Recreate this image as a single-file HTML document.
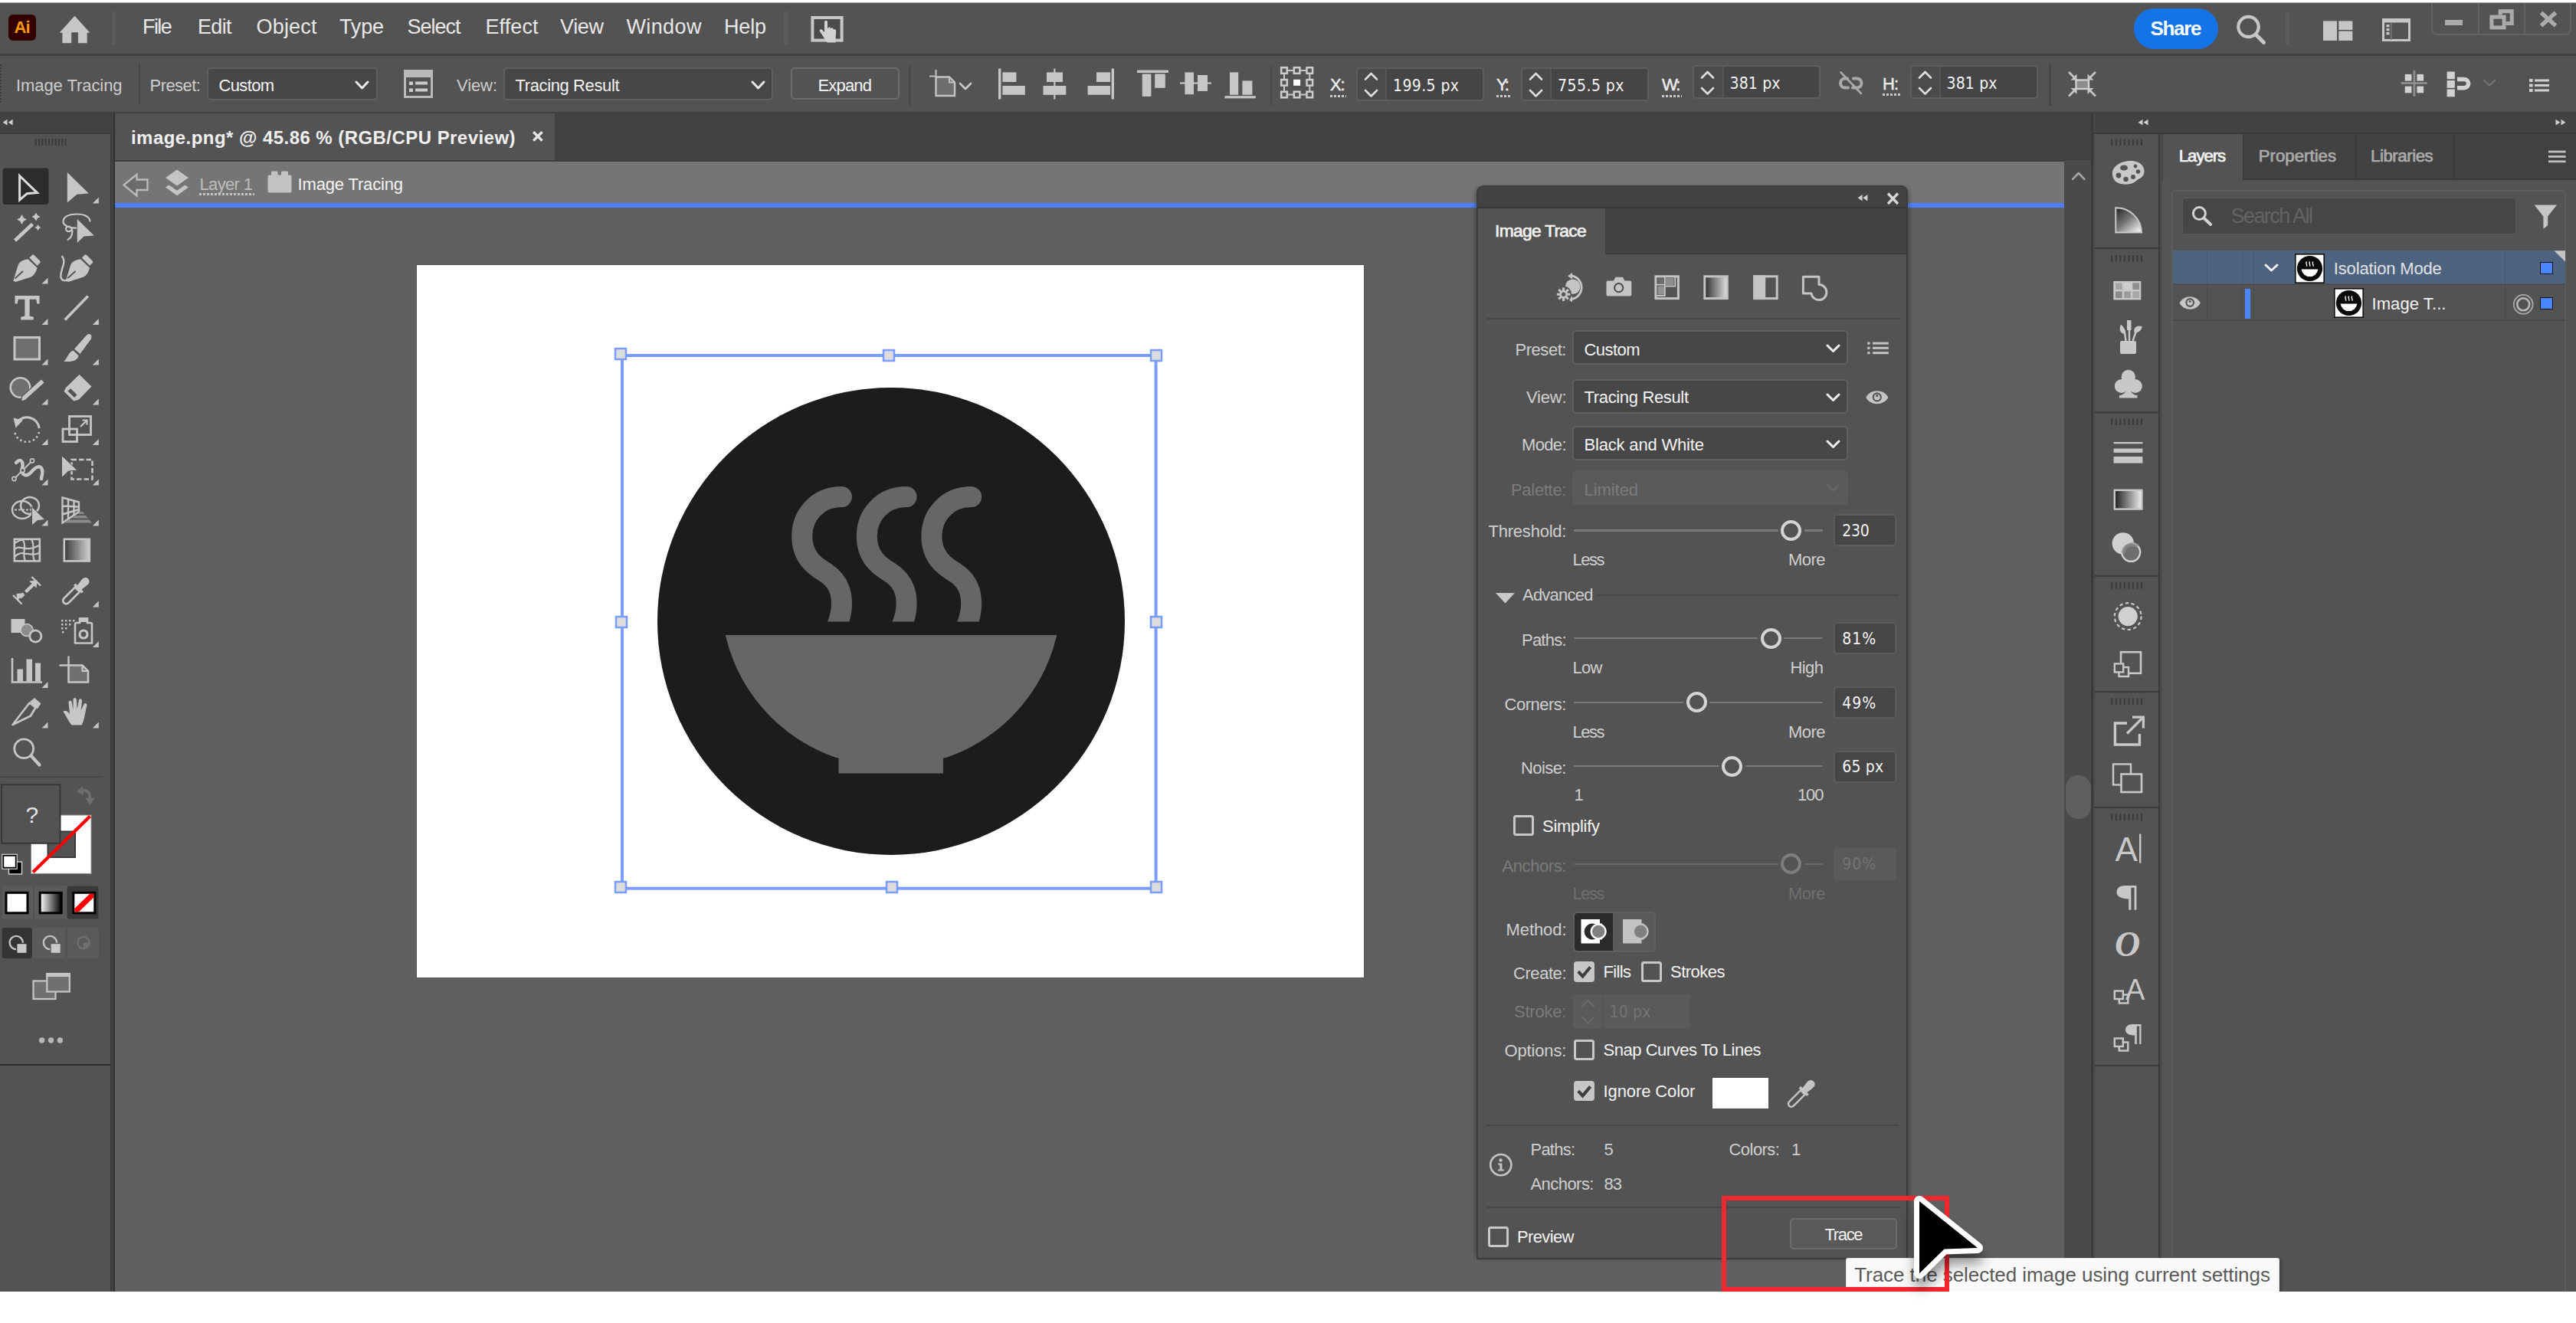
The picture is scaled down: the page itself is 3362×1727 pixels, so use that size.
<!DOCTYPE html>
<html lang="en">
<head>
<meta charset="utf-8">
<title>Adobe Illustrator - Image Trace</title>
<style>
*{box-sizing:border-box;margin:0;padding:0}
html,body{width:3362px;height:1727px;overflow:hidden;background:#fff}
body{position:relative;font-family:"Liberation Sans",sans-serif;color:#dcdcdc}
.a{position:absolute}
.t{position:absolute;white-space:nowrap;display:block}
svg{position:absolute;overflow:visible}
.dd{position:absolute;background:#474747;border:2px solid #5f5f5f;border-radius:5px}
.fld{position:absolute;background:#474747;border:2px solid #5d5d5d;border-radius:4px}
.cb{position:absolute;border:3px solid #c8c8c8;border-radius:3.5px}
</style>
</head>
<body>

<!-- p00_frame -->
<div class="a" id="app" style="left:0px;top:4px;width:3362px;height:1682px;background:#535353;"></div>
<div class="a" style="left:0px;top:3px;width:3362px;height:1px;background:#a9a9a9;"></div>
<div class="a" id="menubar" style="left:0px;top:4px;width:3362px;height:66px;background:#535353;"></div>
<div class="a" style="left:0px;top:70px;width:3362px;height:3px;background:#434343;"></div>
<div class="a" id="ctrlbar" style="left:0px;top:73px;width:3362px;height:73px;background:#535353;"></div>
<div class="a" style="left:0px;top:146px;width:3362px;height:2px;background:#414141;"></div>
<div class="a" id="tabbar" style="left:150px;top:148px;width:2579px;height:62px;background:#424242;"></div>
<div class="a" id="doctab" style="left:150px;top:148px;width:574px;height:62px;background:#535353;"></div>
<div class="a" style="left:150px;top:208.5px;width:2544px;height:2.5px;background:#3e3e3e;"></div>
<div class="a" id="isobar" style="left:150px;top:211px;width:2544px;height:55px;background:#757575;"></div>
<div class="a" id="isoline" style="left:150px;top:265.2px;width:2544px;height:5.8px;background:#4d7ffa;"></div>
<div class="a" id="canvas" style="left:150px;top:271px;width:2544px;height:1415px;background:#606060;"></div>
<div class="a" id="artboard" style="left:544px;top:346px;width:1236px;height:930px;background:#ffffff;outline:1px solid #545454;"></div>

<!-- p10_art -->
<svg id="artwork" style="left:0;top:0" width="3362" height="1727" viewBox="0 0 3362 1727">
  <circle cx="1163" cy="811" r="305" fill="#1d1c1a"/>
  <defs><clipPath id="steamclip"><rect x="1000" y="600" width="340" height="211.5"/></clipPath>
  <clipPath id="bowlclip"><rect x="900" y="829" width="540" height="160.5"/></clipPath></defs>
  <g clip-path="url(#steamclip)" fill="none" stroke="#666666" stroke-width="27" stroke-linecap="round">
    <path id="steam" d="M1098.5,648.6 C1066.3,648.6 1046.7,673.2 1046.7,699.8 C1046.7,727 1063,739 1077.5,747.5 C1093.5,758 1098.5,772 1098.5,788 C1098.5,796.2 1096.9,806 1092,818"/>
    <use href="#steam" x="84.6"/>
    <use href="#steam" x="169.2"/>
  </g>
  <circle cx="1163" cy="779" r="222" fill="#666666" clip-path="url(#bowlclip)"/>
  <rect x="1094.5" y="988" width="136.5" height="21.5" fill="#666666"/>
  <rect x="812" y="464" width="696.6" height="695.7" fill="none" stroke="#7b9cf8" stroke-width="4"/>
  <g fill="#dcdcdc" stroke="#7b9cf8" stroke-width="2.5">
    <rect x="803" y="455" width="14" height="14"/>
    <rect x="1153" y="457" width="14" height="14"/>
    <rect x="1502" y="457" width="14" height="14"/>
    <rect x="804" y="805" width="14" height="14"/>
    <rect x="1502" y="805" width="14" height="14"/>
    <rect x="803" y="1151" width="14" height="14"/>
    <rect x="1157" y="1151" width="14" height="14"/>
    <rect x="1502" y="1151" width="14" height="14"/>
  </g>
</svg>

<!-- p20_menubar -->
<div class="a" style="left:10.5px;top:19px;width:36px;height:33.5px;background:#330000;border-radius:6px;"></div>
<span class="t" style="left:18.60px;top:25.37px;font:normal 700 22px/22px 'Liberation Sans',sans-serif;color:#ff9a00;letter-spacing:-1.000px;">Ai</span>
<svg style="left:77px;top:20px;" width="41" height="37" viewBox="0 0 41 37"><path d="M20.5,0.8 L40.4,22.8 L36.7,22.8 L36.7,36.2 L24.9,36.2 L24.9,22.2 L16.2,22.2 L16.2,36.2 L4.4,36.2 L4.4,22.8 L0.6,22.8 Z" fill="#c6c6c6"/></svg>
<div class="a" style="left:145.5px;top:14.5px;width:5.2px;height:43.5px;background:#5b5b5b;"></div>
<span class="t" style="left:186.00px;top:21.54px;font:normal 400 27px/27px 'Liberation Sans',sans-serif;color:#e8e8e8;letter-spacing:-1.567px;">File</span>
<span class="t" style="left:258.00px;top:21.54px;font:normal 400 27px/27px 'Liberation Sans',sans-serif;color:#e8e8e8;letter-spacing:-0.667px;">Edit</span>
<span class="t" style="left:334.50px;top:21.54px;font:normal 400 27px/27px 'Liberation Sans',sans-serif;color:#e8e8e8;letter-spacing:0.200px;">Object</span>
<span class="t" style="left:443.00px;top:21.54px;font:normal 400 27px/27px 'Liberation Sans',sans-serif;color:#e8e8e8;letter-spacing:-0.167px;">Type</span>
<span class="t" style="left:531.50px;top:21.54px;font:normal 400 27px/27px 'Liberation Sans',sans-serif;color:#e8e8e8;letter-spacing:-1.000px;">Select</span>
<span class="t" style="left:633.50px;top:21.54px;font:normal 400 27px/27px 'Liberation Sans',sans-serif;color:#e8e8e8;letter-spacing:0.100px;">Effect</span>
<span class="t" style="left:731.00px;top:21.54px;font:normal 400 27px/27px 'Liberation Sans',sans-serif;color:#e8e8e8;letter-spacing:-0.375px;">View</span>
<span class="t" style="left:817.50px;top:21.54px;font:normal 400 27px/27px 'Liberation Sans',sans-serif;color:#e8e8e8;letter-spacing:0.375px;">Window</span>
<span class="t" style="left:945.00px;top:21.54px;font:normal 400 27px/27px 'Liberation Sans',sans-serif;color:#e8e8e8;letter-spacing:-0.167px;">Help</span>
<div class="a" style="left:1023.4px;top:14.5px;width:5.4px;height:43.5px;background:#5b5b5b;"></div>
<svg style="left:1058px;top:21px;" width="44" height="36" viewBox="0 0 44 36"><rect x="2.4" y="2" width="38.2" height="29.6" fill="#4b4b4b" stroke="#c6c6c6" stroke-width="4"/>
<path d="M18,8 c0,-3 4,-3 4,0 V16.5 l2.2,-2.6 2,2.2 2.2,-1.2 1.6,2.6 2,-0.6 c1.6,1.8 1.4,5 0.8,8 L32.6,34.5 H21.5 L12,20 c-1.2,-2.4 1.4,-3.6 3,-2 L18,21 Z" fill="#d2d2d2"/></svg>
<div class="a" style="left:2785px;top:10.5px;width:110px;height:53px;background:#1473e6;border-radius:27px;"></div>
<span class="t" style="left:2806.50px;top:24.49px;font:normal 700 26px/26px 'Liberation Sans',sans-serif;color:#ffffff;letter-spacing:-1.312px;">Share</span>
<svg style="left:2916px;top:16px;" width="44" height="44" viewBox="0 0 44 44"><circle cx="18.5" cy="19" r="13.2" fill="none" stroke="#c6c6c6" stroke-width="4.2"/><path d="M28,29 L38.5,39.5" stroke="#c6c6c6" stroke-width="5" stroke-linecap="round"/></svg>
<div class="a" style="left:2983px;top:14.5px;width:5.2px;height:43.5px;background:#5b5b5b;"></div>
<svg style="left:3032px;top:27px;" width="39" height="27" viewBox="0 0 39 27"><rect x="0" y="0.4" width="18" height="25.6" fill="#c6c6c6"/><rect x="20.3" y="0.4" width="18" height="11.6" fill="#c6c6c6"/><rect x="20.3" y="13.6" width="18" height="12.4" fill="#c6c6c6"/></svg>
<svg style="left:3109px;top:24px;" width="38" height="30" viewBox="0 0 38 30"><rect x="1.5" y="1.5" width="34" height="27" fill="none" stroke="#c6c6c6" stroke-width="3"/><rect x="1.5" y="1" width="34" height="4.5" fill="#c6c6c6"/><rect x="5.5" y="8" width="4" height="3.4" fill="#c6c6c6"/><rect x="5.5" y="13" width="4" height="3.4" fill="#c6c6c6"/><rect x="5.5" y="18" width="4" height="3.4" fill="#c6c6c6"/><rect x="11" y="6" width="1.6" height="22" fill="#7a7a7a"/></svg>
<div class="a" style="left:3173px;top:4px;width:183px;height:42px;border:2px solid #626262;border-top:none;border-radius:0 0 8px 8px;"></div>
<div class="a" style="left:3234px;top:4px;width:2px;height:41px;background:#626262;"></div>
<div class="a" style="left:3294px;top:4px;width:2px;height:41px;background:#626262;"></div>
<div class="a" style="left:3191px;top:26.3px;width:23px;height:7px;background:#ababab;"></div>
<svg style="left:3249px;top:12px;" width="33" height="27" viewBox="0 0 33 27"><rect x="14.2" y="2.7" width="15" height="15.8" fill="none" stroke="#ababab" stroke-width="5"/><rect x="0.5" y="7.6" width="21" height="18.8" fill="#535353"/><rect x="2.9" y="10.1" width="16.2" height="13.8" fill="none" stroke="#ababab" stroke-width="5"/></svg>
<svg style="left:3314px;top:15.5px;" width="24" height="18" viewBox="0 0 24 18"><path d="M2.5,0.5 L21.5,17.5 M21.5,0.5 L2.5,17.5" stroke="#ababab" stroke-width="5.4"/></svg>

<!-- p21_ctrl -->
<div class="a" style="left:0;top:84px;width:2px;height:52px;background:repeating-linear-gradient(#3a3a3a 0 2px,#535353 2px 4px)"></div>
<span class="t" style="left:21.00px;top:101.37px;font:normal 400 22px/22px 'Liberation Sans',sans-serif;color:#cdcdcd;letter-spacing:-0.073px;">Image Tracing</span>
<div class="a" style="left:181px;top:82px;width:2px;height:55px;background:#474747;"></div>
<span class="t" style="left:195.50px;top:101.37px;font:normal 400 22px/22px 'Liberation Sans',sans-serif;color:#cdcdcd;letter-spacing:-0.542px;">Preset:</span>
<div class="dd" style="left:270px;top:88px;width:223px;height:43px"></div>
<span class="t" style="left:285.50px;top:101.37px;font:normal 400 22px/22px 'Liberation Sans',sans-serif;color:#f4f4f4;letter-spacing:-0.650px;">Custom</span>
<svg style="left:464px;top:106px;" width="17" height="10" viewBox="0 0 17 10"><path d="M1,1 L8.5,9.0 L16.0,1" fill="none" stroke="#e8e8e8" stroke-width="3" stroke-linecap="round" stroke-linejoin="round"/></svg>
<svg style="left:527px;top:91px;" width="38" height="37" viewBox="0 0 38 37"><rect x="1.5" y="1.5" width="35" height="34" fill="none" stroke="#b9b9b9" stroke-width="3"/><rect x="1" y="1" width="36" height="9" fill="#b9b9b9"/><rect x="7" y="15.5" width="5" height="4.5" fill="#c9c9c9"/><rect x="15" y="15.5" width="16" height="4" fill="#c9c9c9"/><rect x="7" y="24.5" width="5" height="4.5" fill="#c9c9c9"/><rect x="15" y="24.5" width="16" height="4" fill="#c9c9c9"/></svg>
<span class="t" style="left:596.00px;top:101.37px;font:normal 400 22px/22px 'Liberation Sans',sans-serif;color:#cdcdcd;letter-spacing:-0.094px;">View:</span>
<div class="dd" style="left:657px;top:88px;width:352px;height:43px"></div>
<span class="t" style="left:672.50px;top:101.37px;font:normal 400 22px/22px 'Liberation Sans',sans-serif;color:#f4f4f4;letter-spacing:-0.385px;">Tracing Result</span>
<svg style="left:981px;top:106px;" width="17" height="10" viewBox="0 0 17 10"><path d="M1,1 L8.5,9.0 L16.0,1" fill="none" stroke="#e8e8e8" stroke-width="3" stroke-linecap="round" stroke-linejoin="round"/></svg>
<div class="a" style="left:1032px;top:88px;width:142px;height:42px;border:2px solid #6c6c6c;border-radius:5px;background:#535353"></div>
<span class="t" style="left:1067.50px;top:101.37px;font:normal 400 22px/22px 'Liberation Sans',sans-serif;color:#f4f4f4;letter-spacing:-0.825px;">Expand</span>
<div class="a" style="left:1186px;top:86px;width:3px;height:52px;background:#4a4a4a;"></div>
<svg style="left:1212px;top:90px;" width="56" height="38" viewBox="0 0 56 38"><path d="M1,9.5 H9.5 V1" fill="none" stroke="#bdbdbd" stroke-width="2.2"/><path d="M9.5,10.5 H27 L34,17.5 V35 H9.5 Z" fill="#6e6e6e" stroke="#c2c2c2" stroke-width="2.4"/><path d="M27,10.5 V17.5 H34" fill="none" stroke="#c2c2c2" stroke-width="2"/></svg>
<svg style="left:1252px;top:107.5px;" width="16" height="9" viewBox="0 0 16 9"><path d="M1,1 L8.0,8.0 L15.0,1" fill="none" stroke="#c9c9c9" stroke-width="2.6" stroke-linecap="round" stroke-linejoin="round"/></svg>
<svg style="left:0px;top:0px;" width="3362" height="146" viewBox="0 0 3362 146"><rect x="1303.0" y="89.5" width="3.4" height="40.0" fill="#c6c6c6"/><rect x="1308.4" y="94.4" width="18.0" height="12.6" fill="#c6c6c6"/><rect x="1308.4" y="112.0" width="29.4" height="11.8" fill="#c6c6c6"/><rect x="1375.2" y="89.5" width="2.2" height="40.0" fill="#c6c6c6"/><rect x="1366.0" y="94.4" width="21.0" height="12.6" fill="#c6c6c6"/><rect x="1361.5" y="112.0" width="29.8" height="11.8" fill="#c6c6c6"/><rect x="1450.6" y="89.5" width="3.4" height="40.0" fill="#c6c6c6"/><rect x="1431.0" y="94.4" width="18.0" height="12.6" fill="#c6c6c6"/><rect x="1419.6" y="112.0" width="29.4" height="11.8" fill="#c6c6c6"/><rect x="1484.0" y="91.6" width="41.0" height="3.4" fill="#c6c6c6"/><rect x="1490.8" y="96.5" width="11.6" height="29.4" fill="#c6c6c6"/><rect x="1507.2" y="96.5" width="13.6" height="18.3" fill="#c6c6c6"/><rect x="1540.0" y="107.4" width="41.0" height="2.2" fill="#c6c6c6"/><rect x="1546.4" y="94.4" width="11.6" height="28.8" fill="#c6c6c6"/><rect x="1563.0" y="98.0" width="13.0" height="21.0" fill="#c6c6c6"/><rect x="1598.4" y="125.2" width="40.4" height="3.2" fill="#c6c6c6"/><rect x="1605.0" y="94.4" width="11.2" height="29.4" fill="#c6c6c6"/><rect x="1621.4" y="105.4" width="13.0" height="18.4" fill="#c6c6c6"/></svg>
<div class="a" style="left:1657.5px;top:86px;width:2.5px;height:52px;background:#474747;"></div>
<svg style="left:0px;top:0px;" width="3362" height="146" viewBox="0 0 3362 146"><rect x="1672.2" y="88.2" width="7.6" height="7.6" fill="none" stroke="#cdcdcd" stroke-width="2.5"/><rect x="1672.2" y="104.0" width="7.6" height="7.6" fill="none" stroke="#cdcdcd" stroke-width="2.5"/><rect x="1672.2" y="119.7" width="7.6" height="7.6" fill="none" stroke="#cdcdcd" stroke-width="2.5"/><rect x="1688.8" y="88.2" width="7.6" height="7.6" fill="none" stroke="#cdcdcd" stroke-width="2.5"/><rect x="1688.1" y="103.8" width="9" height="8" fill="#ffffff"/><rect x="1688.8" y="119.7" width="7.6" height="7.6" fill="none" stroke="#cdcdcd" stroke-width="2.5"/><rect x="1705.5" y="88.2" width="7.6" height="7.6" fill="none" stroke="#cdcdcd" stroke-width="2.5"/><rect x="1705.5" y="104.0" width="7.6" height="7.6" fill="none" stroke="#cdcdcd" stroke-width="2.5"/><rect x="1705.5" y="119.7" width="7.6" height="7.6" fill="none" stroke="#cdcdcd" stroke-width="2.5"/><path d="M1680.7,92.0 H1687.9 M1697.3,92.0 H1704.6" stroke="#c8c8c8" stroke-width="2"/><path d="M1680.7,123.5 H1687.9 M1697.3,123.5 H1704.6" stroke="#c8c8c8" stroke-width="2"/><path d="M1676.0,96.7 V103.1 M1676.0,112.5 V118.8" stroke="#c8c8c8" stroke-width="2"/><path d="M1709.3,96.7 V103.1 M1709.3,112.5 V118.8" stroke="#c8c8c8" stroke-width="2"/></svg>
<span class="t" style="left:1736.00px;top:100.37px;font:normal 400 22px/22px 'Liberation Sans',sans-serif;color:#ececec;letter-spacing:-1.250px;-webkit-text-stroke:0.5px #ececec;">X:</span>
<div class="a" style="left:1735.5px;top:123.5px;width:21.5px;height:3px;background:repeating-linear-gradient(90deg,#c8c8c8 0 3px,transparent 3px 5px)"></div>
<div class="fld" style="left:1769.5px;top:87.5px;width:167px;height:44px;background:#4b4b4b"></div>
<div class="a" style="left:1809.5px;top:89.5px;width:125px;height:40px;background:#454545;border-radius:0 3px 3px 0;"></div>
<div class="a" style="left:1808.0px;top:89.5px;width:2px;height:40px;background:#555555;"></div>
<svg style="left:1780.5px;top:95.0px;" width="17" height="9.5" viewBox="0 0 17 9.5"><path d="M1,8.5 L8.5,1 L16.0,8.5" fill="none" stroke="#dedede" stroke-width="2.6" stroke-linecap="round" stroke-linejoin="round"/></svg>
<svg style="left:1780.5px;top:116.5px;" width="17" height="9.5" viewBox="0 0 17 9.5"><path d="M1,1 L8.5,8.5 L16.0,1" fill="none" stroke="#dedede" stroke-width="2.6" stroke-linecap="round" stroke-linejoin="round"/></svg>
<span class="t" style="left:1818.00px;top:102.23px;font:normal 400 21px/21px 'DejaVu Sans Condensed','DejaVu Sans',sans-serif;color:#f4f4f4;font-stretch:condensed;letter-spacing:0.393px;">199.5 px</span>
<span class="t" style="left:1953.00px;top:100.37px;font:normal 400 22px/22px 'Liberation Sans',sans-serif;color:#ececec;letter-spacing:-2.625px;-webkit-text-stroke:0.5px #ececec;">Y:</span>
<div class="a" style="left:1952.5px;top:123.5px;width:19.0px;height:3px;background:repeating-linear-gradient(90deg,#c8c8c8 0 3px,transparent 3px 5px)"></div>
<div class="fld" style="left:1984.5px;top:87.5px;width:167px;height:44px;background:#4b4b4b"></div>
<div class="a" style="left:2024.5px;top:89.5px;width:125px;height:40px;background:#454545;border-radius:0 3px 3px 0;"></div>
<div class="a" style="left:2023.0px;top:89.5px;width:2px;height:40px;background:#555555;"></div>
<svg style="left:1995.5px;top:95.0px;" width="17" height="9.5" viewBox="0 0 17 9.5"><path d="M1,8.5 L8.5,1 L16.0,8.5" fill="none" stroke="#dedede" stroke-width="2.6" stroke-linecap="round" stroke-linejoin="round"/></svg>
<svg style="left:1995.5px;top:116.5px;" width="17" height="9.5" viewBox="0 0 17 9.5"><path d="M1,1 L8.5,8.5 L16.0,1" fill="none" stroke="#dedede" stroke-width="2.6" stroke-linecap="round" stroke-linejoin="round"/></svg>
<span class="t" style="left:2033.00px;top:102.23px;font:normal 400 21px/21px 'DejaVu Sans Condensed','DejaVu Sans',sans-serif;color:#f4f4f4;font-stretch:condensed;letter-spacing:0.464px;">755.5 px</span>
<span class="t" style="left:2169.00px;top:100.37px;font:normal 400 22px/22px 'Liberation Sans',sans-serif;color:#ececec;letter-spacing:-2.000px;-webkit-text-stroke:0.5px #ececec;">W:</span>
<div class="a" style="left:2168.5px;top:123.5px;width:26.5px;height:3px;background:repeating-linear-gradient(90deg,#c8c8c8 0 3px,transparent 3px 5px)"></div>
<div class="fld" style="left:2209px;top:85px;width:167px;height:44px;background:#4b4b4b"></div>
<div class="a" style="left:2249px;top:87px;width:125px;height:40px;background:#454545;border-radius:0 3px 3px 0;"></div>
<div class="a" style="left:2247.5px;top:87px;width:2px;height:40px;background:#555555;"></div>
<svg style="left:2220px;top:92.5px;" width="17" height="9.5" viewBox="0 0 17 9.5"><path d="M1,8.5 L8.5,1 L16.0,8.5" fill="none" stroke="#dedede" stroke-width="2.6" stroke-linecap="round" stroke-linejoin="round"/></svg>
<svg style="left:2220px;top:114px;" width="17" height="9.5" viewBox="0 0 17 9.5"><path d="M1,1 L8.5,8.5 L16.0,1" fill="none" stroke="#dedede" stroke-width="2.6" stroke-linecap="round" stroke-linejoin="round"/></svg>
<span class="t" style="left:2257.50px;top:99.03px;font:normal 400 21px/21px 'DejaVu Sans Condensed','DejaVu Sans',sans-serif;color:#f4f4f4;font-stretch:condensed;letter-spacing:0.150px;">381 px</span>
<span class="t" style="left:2457.00px;top:98.87px;font:normal 400 22px/22px 'Liberation Sans',sans-serif;color:#ececec;letter-spacing:-1.000px;-webkit-text-stroke:0.5px #ececec;">H:</span>
<div class="a" style="left:2456.5px;top:122.0px;width:23.0px;height:3px;background:repeating-linear-gradient(90deg,#c8c8c8 0 3px,transparent 3px 5px)"></div>
<div class="fld" style="left:2492.5px;top:85px;width:167px;height:44px;background:#4b4b4b"></div>
<div class="a" style="left:2532.5px;top:87px;width:125px;height:40px;background:#454545;border-radius:0 3px 3px 0;"></div>
<div class="a" style="left:2531.0px;top:87px;width:2px;height:40px;background:#555555;"></div>
<svg style="left:2503.5px;top:92.5px;" width="17" height="9.5" viewBox="0 0 17 9.5"><path d="M1,8.5 L8.5,1 L16.0,8.5" fill="none" stroke="#dedede" stroke-width="2.6" stroke-linecap="round" stroke-linejoin="round"/></svg>
<svg style="left:2503.5px;top:114px;" width="17" height="9.5" viewBox="0 0 17 9.5"><path d="M1,1 L8.5,8.5 L16.0,1" fill="none" stroke="#dedede" stroke-width="2.6" stroke-linecap="round" stroke-linejoin="round"/></svg>
<span class="t" style="left:2540.50px;top:99.03px;font:normal 400 21px/21px 'DejaVu Sans Condensed','DejaVu Sans',sans-serif;color:#f4f4f4;font-stretch:condensed;letter-spacing:0.150px;">381 px</span>
<svg style="left:2399px;top:93px;" width="34" height="31" viewBox="0 0 34 31"><path d="M12,9.5 H9 a6,6 0 0 0 0,12 H13 M20,9.5 H24.5 a6,6 0 0 1 0,12 H19" fill="none" stroke="#a9a9a9" stroke-width="4" stroke-linecap="round"/><path d="M3.5,1.5 L30,29" stroke="#a9a9a9" stroke-width="2.6" stroke-linecap="round"/></svg>
<div class="a" style="left:2674px;top:84px;width:2.5px;height:54px;background:#474747;"></div>
<svg style="left:0px;top:0px;" width="3362" height="146" viewBox="0 0 3362 146"><path d="M2700.0,94.0 L2708.0,102.0" stroke="#c6c6c6" stroke-width="2.6"/><path d="M2710.5,104.5 L2710.5,96.5 L2702.5,104.5 Z" fill="#c6c6c6"/><path d="M2735.0,94.0 L2727.0,102.0" stroke="#c6c6c6" stroke-width="2.6"/><path d="M2724.5,104.5 L2724.5,96.5 L2732.5,104.5 Z" fill="#c6c6c6"/><path d="M2700.0,125.5 L2708.0,117.5" stroke="#c6c6c6" stroke-width="2.6"/><path d="M2710.5,115.0 L2710.5,123.0 L2702.5,115.0 Z" fill="#c6c6c6"/><path d="M2735.0,125.5 L2727.0,117.5" stroke="#c6c6c6" stroke-width="2.6"/><path d="M2724.5,115.0 L2724.5,123.0 L2732.5,115.0 Z" fill="#c6c6c6"/><rect x="2709.5" y="104.5" width="16.5" height="11.5" fill="#8c8c8c" stroke="#cfcfcf" stroke-width="2.4"/></svg>
<svg style="left:0px;top:0px;" width="3362" height="146" viewBox="0 0 3362 146"><rect x="3138.7" y="96.9" width="8.7" height="8.7" fill="#d2d2d2"/><rect x="3154.4" y="96.9" width="8.7" height="8.7" fill="#d2d2d2"/><rect x="3138.7" y="112.6" width="8.7" height="8.7" fill="#d2d2d2"/><rect x="3154.4" y="112.6" width="8.7" height="8.7" fill="#d2d2d2"/><rect x="3149.5" y="91.8" width="2.8" height="34.0" fill="#8e8e8e"/><rect x="3133.6" y="107.2" width="34.0" height="2.8" fill="#8e8e8e"/></svg>
<svg style="left:0px;top:0px;" width="3362" height="146" viewBox="0 0 3362 146"><rect x="3193.6" y="93.5" width="10.2" height="9.8" fill="#d2d2d2"/><rect x="3193.6" y="105.0" width="10.2" height="9.8" fill="#d2d2d2"/><rect x="3193.6" y="116.5" width="10.2" height="9.8" fill="#d2d2d2"/><path d="M3207,103.5 H3216 a5.6,5.6 0 0 1 0,11.2 H3207" fill="none" stroke="#d2d2d2" stroke-width="5.6"/></svg>
<svg style="left:3241px;top:103.5px;" width="16" height="8.5" viewBox="0 0 16 8.5"><path d="M1,1 L8.0,7.5 L15.0,1" fill="none" stroke="#757575" stroke-width="2.2" stroke-linecap="round" stroke-linejoin="round"/></svg>
<svg style="left:0px;top:0px;" width="3362" height="146" viewBox="0 0 3362 146"><rect x="3301.0" y="103.0" width="4.6" height="4.0" fill="#cfcfcf"/><rect x="3301.0" y="109.5" width="4.6" height="4.0" fill="#cfcfcf"/><rect x="3301.0" y="116.0" width="4.6" height="4.0" fill="#cfcfcf"/><rect x="3308.0" y="103.5" width="19.0" height="3.0" fill="#cfcfcf"/><rect x="3308.0" y="110.0" width="19.0" height="3.0" fill="#cfcfcf"/><rect x="3308.0" y="116.5" width="19.0" height="3.0" fill="#cfcfcf"/></svg>

<!-- p30_doc -->
<span class="t" style="left:171.00px;top:167.68px;font:normal 700 24px/24px 'Liberation Sans',sans-serif;color:#f0f0f0;letter-spacing:0.449px;">image.png* @ 45.86 % (RGB/CPU Preview)</span>
<svg style="left:695px;top:171px;" width="14" height="14" viewBox="0 0 14 14"><path d="M1.2,1.2 L12.6,12.6 M12.6,1.2 L1.2,12.6" stroke="#e6e6e6" stroke-width="3.4"/></svg>
<svg style="left:160px;top:226px;" width="35" height="32" viewBox="0 0 35 32"><path d="M1.5,15.5 L18.5,1.8 V8.5 H32.5 V22 H18.5 V29.5 Z" fill="#6b6b6b" stroke="#b9b9b9" stroke-width="2.4" stroke-linejoin="miter"/></svg>
<svg style="left:215px;top:220px;" width="33" height="37" viewBox="0 0 33 37"><path d="M16,1.5 L31,12 L16,22.5 L1,12 Z" fill="#c4c4c4"/><path d="M5.5,21.5 L16,28.8 L26.5,21.5 L31,24.6 L16,35.2 L1,24.6 Z" fill="#c4c4c4"/></svg>
<span class="t" style="left:260.50px;top:229.57px;font:normal 400 22px/22px 'Liberation Sans',sans-serif;color:#bdbdbd;letter-spacing:-0.646px;">Layer 1</span>
<div class="a" style="left:260px;top:251.5px;width:72px;height:3px;background:repeating-linear-gradient(90deg,#c4c4c4 0 3px,transparent 3px 5px)"></div>
<svg style="left:349px;top:223px;" width="32" height="29" viewBox="0 0 32 29"><path d="M5,5.5 V2 a1.5,1.5 0 0 1 1.5,-1.5 H12 a1.5,1.5 0 0 1 1.5,1.5 V5.5 H18 V2 a1.5,1.5 0 0 1 1.5,-1.5 H25.5 a1.5,1.5 0 0 1 1.5,1.5 V5.5 H29.5 a2,2 0 0 1 2,2 V26.5 a2,2 0 0 1 -2,2 H2.5 a2,2 0 0 1 -2,-2 V7.5 a2,2 0 0 1 2,-2 Z" fill="#c2c2c2"/></svg>
<span class="t" style="left:388.50px;top:229.57px;font:normal 400 22px/22px 'Liberation Sans',sans-serif;color:#f4f4f4;letter-spacing:-0.156px;">Image Tracing</span>

<!-- p40_ltool -->
<div class="a" id="ltool" style="left:0px;top:148px;width:144px;height:1538px;background:#535353;"></div>
<div class="a" style="left:144px;top:148px;width:1.8px;height:1538px;background:#3a3a3a;"></div>
<div class="a" style="left:145.8px;top:148px;width:2.4px;height:1538px;background:#464646;"></div>
<div class="a" style="left:148.2px;top:148px;width:1.8px;height:1538px;background:#2f2f2f;"></div>
<div class="a" style="left:0px;top:148px;width:145px;height:26px;background:#424242;"></div>
<div class="a" style="left:0px;top:173px;width:145px;height:1.5px;background:#3a3a3a;"></div>
<svg style="left:0px;top:0px;" width="150" height="1700" viewBox="0 0 150 1700"><path d="M9.5,155.8 V163.6 L3.6,159.7 Z M16.6,155.8 V163.6 L10.7,159.7 Z" fill="#d0d0d0"/><rect x="45.8" y="181" width="2" height="9" fill="#3a3a3a"/><rect x="50.1" y="181" width="2" height="9" fill="#3a3a3a"/><rect x="54.4" y="181" width="2" height="9" fill="#3a3a3a"/><rect x="58.7" y="181" width="2" height="9" fill="#3a3a3a"/><rect x="63.0" y="181" width="2" height="9" fill="#3a3a3a"/><rect x="67.3" y="181" width="2" height="9" fill="#3a3a3a"/><rect x="71.6" y="181" width="2" height="9" fill="#3a3a3a"/><rect x="75.9" y="181" width="2" height="9" fill="#3a3a3a"/><rect x="80.2" y="181" width="2" height="9" fill="#3a3a3a"/><rect x="84.5" y="181" width="2" height="9" fill="#3a3a3a"/><rect x="3.5" y="219.5" width="60" height="47.5" rx="4" fill="#2c2c2c"/><path d="M25.6,229.5 L48.5,251.6 L35.2,252.8 L25.6,261 Z" fill="#2c2c2c" stroke="#dcdcdc" stroke-width="3" stroke-linejoin="miter"/><path d="M87.8,225 L115.8,252.6 L100.4,253.8 L87.8,264.5 Z" fill="#c6c6c6"/><path d="M128.8,257.5 V265.5 H120.8 Z" fill="#c6c6c6"/><path d="M19.5,314 L42.5,292.5" stroke="#c6c6c6" stroke-width="4.6" stroke-linecap="butt"/><path d="M28.5,280.0 L30.8,284.2 L35.0,286.5 L30.8,288.8 L28.5,293.0 L26.2,288.8 L22.0,286.5 L26.2,284.2 Z" fill="#c6c6c6"/><path d="M47.0,277.5 L49.0,281.0 L52.5,283.0 L49.0,285.0 L47.0,288.5 L45.0,285.0 L41.5,283.0 L45.0,281.0 Z" fill="#c6c6c6"/><path d="M49.5,293.0 L50.9,295.6 L53.5,297.0 L50.9,298.4 L49.5,301.0 L48.1,298.4 L45.5,297.0 L48.1,295.6 Z" fill="#c6c6c6"/><path d="M100,297.5 C88,298 82,293 82.5,288.5 C83.5,281.5 93,279.5 101,279.5 C110,279.5 117.5,283 117.5,289.5" fill="none" stroke="#c6c6c6" stroke-width="2.2"/><path d="M93,300 a3.6,3.2 0 1 1 -1,-3.5 C95,299 95.5,305 91.5,311 M88,313.5 L93,309" fill="none" stroke="#c6c6c6" stroke-width="2.2"/><path d="M100.8,286 L122.8,307.4 L109.6,308.4 L100.8,317 Z" fill="#c6c6c6"/><g transform="translate(17.0,332.0)"><path d="M0.3,34.5 L7,13 C9.5,8.5 14,7.2 19.5,6.2 L31.5,17.5 C30.5,22 28,27.5 23,29.8 L3.5,36 Z" fill="#c6c6c6"/><path d="M2.5,31.5 L13,22" stroke="#535353" stroke-width="1.8"/><path d="M22.5,3.2 L26,-0.3 a2,2 0 0 1 2.8,0 L36.3,7.2 a2,2 0 0 1 0,2.8 L32.8,13.5 Z" fill="#c6c6c6" transform="translate(-1.2,1.2)"/></g><path d="M62.5,362.5 V370.5 H54.5 Z" fill="#c6c6c6"/><g transform="translate(85.5,332.0)"><path d="M0.3,34.5 L7,13 C9.5,8.5 14,7.2 19.5,6.2 L31.5,17.5 C30.5,22 28,27.5 23,29.8 L3.5,36 Z" fill="#c6c6c6"/><path d="M2.5,31.5 L13,22" stroke="#535353" stroke-width="1.8"/><path d="M22.5,3.2 L26,-0.3 a2,2 0 0 1 2.8,0 L36.3,7.2 a2,2 0 0 1 0,2.8 L32.8,13.5 Z" fill="#c6c6c6" transform="translate(-1.2,1.2)"/></g><path d="M80.5,334 C88,342 78,352 79.5,362 C80.5,367 86,367.5 89.5,364" fill="none" stroke="#c6c6c6" stroke-width="2.4"/><path d="M19.5,386 H51.5 V396.5 H48.3 L47.3,390.8 H38.6 V412.5 L43.8,413.8 V417.5 H27.2 V413.8 L32.4,412.5 V390.8 H23.7 L22.7,396.5 H19.5 Z" fill="#c6c6c6"/><path d="M62.5,416.0 V424.0 H54.5 Z" fill="#c6c6c6"/><path d="M84.8,417.5 L114.8,386.5" stroke="#c6c6c6" stroke-width="3.6"/><path d="M128.8,416.0 V424.0 H120.8 Z" fill="#c6c6c6"/><rect x="19" y="440.5" width="32.5" height="28.5" fill="#707070" stroke="#c6c6c6" stroke-width="3"/><path d="M62.5,468.5 V476.5 H54.5 Z" fill="#c6c6c6"/><path d="M118,436.5 C120,438 119.5,441 118.5,443 L104.5,462 L97,455.5 L113,437.5 C114.5,436 116.5,435.5 118,436.5 Z" fill="#c6c6c6"/><path d="M95.5,457.5 L102.5,464 C101.5,471.5 92,473 83,471.5 C88.5,468.5 88,460.5 95.5,457.5 Z" fill="#c6c6c6"/><path d="M128.8,468.5 V476.5 H120.8 Z" fill="#c6c6c6"/><circle cx="26.5" cy="506" r="12.8" fill="#707070" stroke="#c6c6c6" stroke-width="2.6"/><path d="M28.5,517.5 L54,494.5 L58.5,499.5 L33,522.5 L27.5,524 Z" fill="#c6c6c6" stroke="#535353" stroke-width="1.2"/><path d="M62.5,520.5 V528.5 H54.5 Z" fill="#c6c6c6"/><path d="M103.5,489 L119.5,504.5 L103,521.5 L96.5,523.5 L83.5,511 L86,506 Z" fill="#c6c6c6"/><path d="M88.5,510.5 L92,507 L100.5,515.5 L97,519 Z" fill="#535353"/><path d="M128.8,520.5 V528.5 H120.8 Z" fill="#c6c6c6"/><path d="M22,551.5 A16.2,16.2 0 0 1 51.2,559" fill="none" stroke="#c6c6c6" stroke-width="3"/><path d="M17.5,545.5 L30,548.5 L20.5,558.5 Z" fill="#c6c6c6"/><path d="M51,564 A16.2,16.2 0 0 1 19,562" fill="none" stroke="#c6c6c6" stroke-width="2.6" stroke-dasharray="2.4 3.4"/><path d="M62.5,573.0 V581.0 H54.5 Z" fill="#c6c6c6"/><rect x="90.5" y="543.5" width="28" height="24" fill="none" stroke="#c6c6c6" stroke-width="2.8"/><rect x="82" y="560" width="18.5" height="16.5" fill="none" stroke="#c6c6c6" stroke-width="2.8"/><path d="M105,557 L113,549 M107.5,548.5 H113.5 V554.5" fill="none" stroke="#c6c6c6" stroke-width="2.2"/><path d="M128.8,573.0 V581.0 H120.8 Z" fill="#c6c6c6"/><path d="M21,604 C27,597 31,603 29,611 C27,620 34,623 40,617 C46,610 52,606 55,613 C56.5,618 54,621 54,625" fill="none" stroke="#c6c6c6" stroke-width="4.4" stroke-linecap="round"/><path d="M18.5,625 L42,601.5" stroke="#c6c6c6" stroke-width="1.8"/><circle cx="18.5" cy="625" r="2.6" fill="#535353" stroke="#c6c6c6" stroke-width="1.6"/><circle cx="42" cy="601.5" r="2.6" fill="#535353" stroke="#c6c6c6" stroke-width="1.6"/><circle cx="29.5" cy="614" r="2.6" fill="#535353" stroke="#c6c6c6" stroke-width="1.6"/><path d="M62.5,625.5 V633.5 H54.5 Z" fill="#c6c6c6"/><rect x="93.5" y="600" width="27" height="25.5" fill="none" stroke="#c6c6c6" stroke-width="2.6" stroke-dasharray="6.5 3"/><path d="M80.5,594.5 L101,614 L89.5,615 L80.5,623.5 Z" fill="#c6c6c6" stroke="#535353" stroke-width="1"/><path d="M128.8,625.5 V633.5 H120.8 Z" fill="#c6c6c6"/><ellipse cx="29" cy="665.5" rx="13" ry="11.5" fill="none" stroke="#c6c6c6" stroke-width="2.4"/><ellipse cx="39" cy="660" rx="12" ry="11" fill="none" stroke="#c6c6c6" stroke-width="2.4"/><path d="M19,665.5 H41" stroke="#c6c6c6" stroke-width="2.2" stroke-dasharray="3 2"/><path d="M41.5,661.5 L59,678.5 L49,679.5 L41.5,686 Z" fill="#c6c6c6" stroke="#535353" stroke-width="1"/><path d="M62.5,678.5 V686.5 H54.5 Z" fill="#c6c6c6"/><path d="M81.5,649.5 L103,655.5 V668 L81.5,682.5 Z M81.5,660.5 L103,661.5 M81.5,671.5 L103,665 M89,651.5 V677.5 M96.5,653.5 V672.5" fill="none" stroke="#c6c6c6" stroke-width="2.4"/><path d="M104,668 H108 L110.5,671 H101 Z" fill="#8a8a8a"/><path d="M98,673 H112 L115,676.5 H93 Z" fill="#8a8a8a"/><path d="M89,678.5 H116.5 L120,682.5 H83 Z" fill="#8a8a8a"/><path d="M128.8,678.5 V686.5 H120.8 Z" fill="#c6c6c6"/><rect x="18.8" y="703.8" width="33" height="28.6" fill="none" stroke="#c6c6c6" stroke-width="2.6"/><path d="M19,717 C27,710 33,722 51,712 M19,727 C29,716 38,728 51,722 M29,704 C36,712 28,722 33,732 M41,704 C47,714 40,722 45,732 M19,709 C24,706 26,705 30,704.5" fill="none" stroke="#c6c6c6" stroke-width="2.2"/><defs><linearGradient id="lg1" x1="0" x2="1" y1="0" y2="0"><stop offset="0" stop-color="#3a3a3a"/><stop offset="1" stop-color="#cfcfcf"/></linearGradient></defs><rect x="83.8" y="703.8" width="33" height="28.6" fill="url(#lg1)" stroke="#c6c6c6" stroke-width="2.6"/><path d="M17,777 L28.5,788.5 M41.5,753 L53,764.5" stroke="#c6c6c6" stroke-width="2.4"/><path d="M26,780 L45,761.5" stroke="#c6c6c6" stroke-width="4.4" stroke-dasharray="7 3.4 20"/><path d="M21.5,775 L31.5,774 L22.5,784.5 Z M48.5,757.5 L47.5,767.5 L38,758.5 Z" fill="#c6c6c6"/><g transform="translate(81.0,752.5) scale(1.000)"><path d="M2.5,34.5 C0.5,32.5 1,30 3,28 L17,14 L23,20 L9,34 C7,36 4.5,36.5 2.5,34.5 Z" fill="none" stroke="#c6c6c6" stroke-width="2.6"/><path d="M15,11.5 L17.5,9 L20,11.5 L25,5 C27,2 31,0 34,3 C37,6 35,10 32,12 L25.5,17 L28,19.5 L25.5,22 Z" fill="#c6c6c6"/></g><path d="M128.8,784.5 V792.5 H120.8 Z" fill="#c6c6c6"/><rect x="14.5" y="808" width="18" height="18" fill="#c6c6c6"/><circle cx="35" cy="822.5" r="8" fill="#8c8c8c" stroke="#c6c6c6" stroke-width="1.6"/><circle cx="46.3" cy="830.5" r="7.6" fill="#535353" stroke="#c6c6c6" stroke-width="2.8"/><rect x="80.0" y="809.0" width="2.4" height="2.4" fill="#c6c6c6"/><rect x="85.0" y="809.0" width="2.4" height="2.4" fill="#c6c6c6"/><rect x="90.0" y="809.0" width="2.4" height="2.4" fill="#c6c6c6"/><rect x="95.0" y="809.0" width="2.4" height="2.4" fill="#c6c6c6"/><rect x="80.0" y="814.0" width="2.4" height="2.4" fill="#c6c6c6"/><rect x="85.0" y="814.0" width="2.4" height="2.4" fill="#c6c6c6"/><rect x="90.0" y="814.0" width="2.4" height="2.4" fill="#c6c6c6"/><rect x="80.0" y="819.0" width="2.4" height="2.4" fill="#c6c6c6"/><rect x="85.0" y="819.0" width="2.4" height="2.4" fill="#c6c6c6"/><rect x="81.0" y="824.0" width="2.4" height="2.4" fill="#c6c6c6"/><path d="M104,807.5 H114 V813 H118 a2,2 0 0 1 2,2 V839.5 H98 V815 a2,2 0 0 1 2,-2 H104 Z" fill="none" stroke="#c6c6c6" stroke-width="2.6"/><rect x="104" y="806" width="10" height="6" fill="#c6c6c6"/><circle cx="109" cy="828" r="5" fill="none" stroke="#c6c6c6" stroke-width="3.2"/><path d="M128.8,837.0 V845.0 H120.8 Z" fill="#c6c6c6"/><path d="M16,859 V890.5 H55" fill="none" stroke="#c6c6c6" stroke-width="2.6"/><rect x="22.5" y="873.5" width="7.5" height="16" fill="#c6c6c6"/><rect x="34.5" y="860.5" width="7.5" height="29" fill="#c6c6c6"/><rect x="46" y="865.5" width="7" height="24" fill="#c6c6c6"/><path d="M62.5,890.0 V898.0 H54.5 Z" fill="#c6c6c6"/><path d="M77.5,868.5 H89.5 M89.5,856.5 V868" stroke="#c6c6c6" stroke-width="2.4"/><path d="M89.5,868.5 H107.5 L115,876 V890.5 H89.5 Z" fill="#707070" stroke="#c6c6c6" stroke-width="2.6"/><path d="M107.5,868.5 V876 H115" fill="none" stroke="#c6c6c6" stroke-width="2.2"/><path d="M16.5,946 L38.5,917.5 L46.5,923.5 L40,934.5 Z" fill="none" stroke="#c6c6c6" stroke-width="2.6" stroke-linejoin="round"/><path d="M39,916 L45,911 L53.5,918.5 L48.5,925.5 Z" fill="#c6c6c6"/><path d="M62.5,942.5 V950.5 H54.5 Z" fill="#c6c6c6"/><path d="M93.5,946.5 C89,941 86,934 82.5,929 C84.5,926.5 88,927.5 91,932 L89.5,917.5 C89.2,914 93.2,913.5 93.8,917 L95.5,926.5 L95.5,913.5 C95.5,910 99.8,910 99.9,913.5 L100.6,926 L102.8,914.5 C103.4,911.2 107.5,911.8 107,915.2 L105.6,927.5 L109.3,919.5 C110.6,916.6 114.3,918 113.3,921.2 C111.5,927.5 110.5,940 106.5,946.5 Z" fill="#c6c6c6"/><path d="M128.8,942.5 V950.5 H120.8 Z" fill="#c6c6c6"/><circle cx="31.2" cy="977.2" r="12.4" fill="none" stroke="#c6c6c6" stroke-width="2.8"/><path d="M40.5,986.5 L51.5,998.5" stroke="#c6c6c6" stroke-width="4.2" stroke-linecap="round"/><rect x="0" y="1013" width="133.5" height="2" fill="#474747"/></svg>

<!-- p41_ltool2 -->
<svg style="left:0px;top:0px;" width="150" height="1700" viewBox="0 0 150 1700"><path d="M103,1033 C112,1029 118,1034 117.5,1043" fill="none" stroke="#6e6e6e" stroke-width="4"/><path d="M100,1033.5 L108,1026.5 L109,1038 Z M111,1041.5 H124 L117.5,1051 Z" fill="#6e6e6e"/><rect x="40.5" y="1064" width="78.5" height="76.5" fill="#ffffff" stroke="#8e8e8e" stroke-width="1"/><rect x="62.5" y="1085.5" width="35.5" height="33.5" fill="#535353" stroke="#3a3a3a" stroke-width="2"/><path d="M43,1138.5 L117.5,1065.5" stroke="#ff0000" stroke-width="4.4"/><rect x="2" y="1024.3" width="76.5" height="76.5" fill="#535353" stroke="#383838" stroke-width="2"/><rect x="11.5" y="1125" width="17" height="16" fill="#000" stroke="#d8d8d8" stroke-width="1.4"/><rect x="4" y="1116.5" width="17" height="16.5" fill="#fff" stroke="#000" stroke-width="2.4"/><rect x="2.8" y="1115.3" width="19.4" height="18.9" fill="none" stroke="#d8d8d8" stroke-width="1.2"/><rect x="2.5" y="1156.5" width="126" height="43" rx="4" fill="#5b5b5b"/><rect x="87.5" y="1156.5" width="41" height="43" rx="3" fill="#393939"/><rect x="43" y="1157" width="1.4" height="42" fill="#505050"/><rect x="8" y="1165.3" width="28" height="26.5" fill="#fff" stroke="#000" stroke-width="3"/><defs><linearGradient id="lg2" x1="0" x2="1"><stop offset="0" stop-color="#fff"/><stop offset="1" stop-color="#000"/></linearGradient><clipPath id="cpn"><rect x="97.3" y="1166.8" width="25" height="23.5"/></clipPath></defs><rect x="52.2" y="1165.3" width="28" height="26.5" fill="url(#lg2)" stroke="#000" stroke-width="3"/><rect x="95.8" y="1165.3" width="28" height="26.5" fill="#fff" stroke="#000" stroke-width="3"/><path d="M96,1192 L124,1165" stroke="#ff0000" stroke-width="7" clip-path="url(#cpn)"/><rect x="2.5" y="1211" width="126.5" height="40" rx="4" fill="#5a5a5a"/><rect x="2.5" y="1211" width="39.5" height="40" rx="3" fill="#343434"/><rect x="86" y="1212" width="1.4" height="38" fill="#4e4e4e"/><circle cx="21.2" cy="1230.5" r="8.6" fill="none" stroke="#c2c2c2" stroke-width="2.4"/><rect x="21.7" y="1231.5" width="13.5" height="13" fill="#c8c8c8" stroke="#343434" stroke-width="1.4"/><circle cx="65.4" cy="1230.5" r="8.6" fill="none" stroke="#c2c2c2" stroke-width="2.4"/><rect x="65.9" y="1231.5" width="13.5" height="13" fill="#c8c8c8" stroke="#5a5a5a" stroke-width="1.4"/><circle cx="109" cy="1230.5" r="7.6" fill="none" stroke="#707070" stroke-width="2.2"/><path d="M109,1230.5 h7.6 a7.6,7.6 0 0 1 -7.6,7.6 Z" fill="#707070"/><rect x="43.5" y="1280.5" width="29" height="23.5" fill="#707070" stroke="#c6c6c6" stroke-width="2.2"/><rect x="61.3" y="1271" width="29.5" height="23.5" fill="#707070" stroke="#c6c6c6" stroke-width="2.2"/><rect x="60.3" y="1270" width="31.5" height="5" fill="#c6c6c6"/><circle cx="54.6" cy="1358" r="3.7" fill="#b6b6b6"/><circle cx="66.6" cy="1358" r="3.7" fill="#b6b6b6"/><circle cx="78.4" cy="1358" r="3.7" fill="#b6b6b6"/><rect x="0" y="1389" width="144" height="2" fill="#2c2c2c"/></svg>
<span class="t" style="left:33.50px;top:1048.60px;font:normal 400 30px/30px 'Liberation Sans',sans-serif;color:#e4e4e4;">?</span>

<!-- p50_trace -->
<div class="a" id="itp" style="left:1927px;top:242px;width:563px;height:1402px;background:#535353;border:2px solid #3c3c3c;border-radius:9px 9px 0 0;box-shadow:-4px 0 6px -3px rgba(0,0,0,.35),4px 0 6px -3px rgba(0,0,0,.35);overflow:hidden"><div class="a" style="left:0;top:0;width:100%;height:26px;background:#424242"></div><div class="a" style="left:0;top:26px;width:100%;height:2.4px;background:#363636"></div><div class="a" style="left:0;top:28.4px;width:100%;height:59px;background:#424242"></div><div class="a" style="left:0;top:28.4px;width:166px;height:60px;background:#535353"></div><div class="a" style="left:166px;top:86.5px;width:400px;height:1.5px;background:#3b3b3b"></div></div>
<svg style="left:2424px;top:253px;" width="56" height="14" viewBox="0 0 56 14"><path d="M6.6,1 V9.4 L0.6,5.2 Z M13.4,1 V9.4 L7.4,5.2 Z" fill="#d0d0d0"/><path d="M40,-0.5 L53,13 M53,-0.5 L40,13" stroke="#d6d6d6" stroke-width="3.4"/></svg>
<span class="t" style="left:1951.00px;top:290.20px;font:normal 400 22.8px/22.8px 'Liberation Sans',sans-serif;color:#f2f2f2;letter-spacing:-0.700px;-webkit-text-stroke:0.7px #f2f2f2;">Image Trace</span>
<svg style="left:0px;top:0px;" width="3362" height="1727" viewBox="0 0 3362 1727"><path d="M2050.5,360 A15.4,15.4 0 0 1 2050.5,390.6" fill="none" stroke="#c4c4c4" stroke-width="2.8"/><path d="M2046,360.2 L2052,356 V364.4 Z M2046,390.4 L2052,386.2 V394.6 Z" fill="#c4c4c4"/><circle cx="2052.6" cy="374.3" r="9.8" fill="#c4c4c4"/><circle cx="2040.6" cy="384.2" r="10.6" fill="#535353"/><g transform="translate(2040.6,384.2)"><rect x="-1.6" y="-8.8" width="3.2" height="5" fill="#c4c4c4" transform="rotate(0)"/><rect x="-1.6" y="-8.8" width="3.2" height="5" fill="#c4c4c4" transform="rotate(45)"/><rect x="-1.6" y="-8.8" width="3.2" height="5" fill="#c4c4c4" transform="rotate(90)"/><rect x="-1.6" y="-8.8" width="3.2" height="5" fill="#c4c4c4" transform="rotate(135)"/><rect x="-1.6" y="-8.8" width="3.2" height="5" fill="#c4c4c4" transform="rotate(180)"/><rect x="-1.6" y="-8.8" width="3.2" height="5" fill="#c4c4c4" transform="rotate(225)"/><rect x="-1.6" y="-8.8" width="3.2" height="5" fill="#c4c4c4" transform="rotate(270)"/><rect x="-1.6" y="-8.8" width="3.2" height="5" fill="#c4c4c4" transform="rotate(315)"/><circle r="5.4" fill="#c4c4c4"/><circle r="2.6" fill="#535353"/></g><path d="M2098.5,366.5 H2106 L2108.5,361.8 H2118 L2120.5,366.5 H2127.3 a2,2 0 0 1 2,2 V384.6 a2,2 0 0 1 -2,2 H2098.5 a2,2 0 0 1 -2,-2 V368.5 a2,2 0 0 1 2,-2 Z" fill="#c4c4c4"/><circle cx="2112.7" cy="375.7" r="5.6" fill="#c4c4c4" stroke="#4a4a4a" stroke-width="2"/><rect x="2160.9" y="360.8" width="29.5" height="28.8" fill="none" stroke="#c4c4c4" stroke-width="3"/><rect x="2163.5" y="363" width="8" height="7.5" fill="#6c6c6c"/><rect x="2173.5" y="363" width="11" height="9.5" fill="#8c8c8c"/><rect x="2163.5" y="373.5" width="9" height="11" fill="#929292"/><path d="M2161,371.7 H2172.8 V362 M2172.8,371.7 V386 H2162 M2172.8,373.7 H2186.3 V362" fill="none" stroke="#c4c4c4" stroke-width="1.8"/><defs><linearGradient id="lg3" x1="0" x2="1"><stop offset="0" stop-color="#2c2c2c"/><stop offset="1" stop-color="#e2e2e2"/></linearGradient></defs><rect x="2224.8" y="360.8" width="29.5" height="28.8" fill="url(#lg3)" stroke="#c4c4c4" stroke-width="3"/><rect x="2289.7" y="360.8" width="29.5" height="28.8" fill="#535353" stroke="#c4c4c4" stroke-width="3"/><rect x="2288.2" y="359.3" width="16" height="31.8" fill="#c4c4c4"/><path d="M2353.4,361.3 H2374 V371.6 A10,10 0 1 1 2364,383 H2353.4 Z" fill="none" stroke="#c4c4c4" stroke-width="3" stroke-linejoin="round"/></svg>
<div class="a" style="left:1940px;top:414.5px;width:538px;height:2px;background:#474747;"></div>
<span class="t" style="left:1977.50px;top:445.57px;font:normal 400 22px/22px 'Liberation Sans',sans-serif;color:#cfcfcf;letter-spacing:-0.458px;">Preset:</span>
<div class="dd" style="left:2052px;top:431.3px;width:360px;height:45px"></div>
<span class="t" style="left:2067.50px;top:445.57px;font:normal 400 22px/22px 'Liberation Sans',sans-serif;color:#f4f4f4;letter-spacing:-0.550px;">Custom</span>
<svg style="left:2383.5px;top:449.8px;" width="17" height="9.5" viewBox="0 0 17 9.5"><path d="M1,1 L8.5,8.5 L16.0,1" fill="none" stroke="#f0f0f0" stroke-width="3" stroke-linecap="round" stroke-linejoin="round"/></svg>
<span class="t" style="left:1992.00px;top:508.47px;font:normal 400 22px/22px 'Liberation Sans',sans-serif;color:#cfcfcf;letter-spacing:-0.219px;">View:</span>
<div class="dd" style="left:2052px;top:495.0px;width:360px;height:45px"></div>
<span class="t" style="left:2067.50px;top:508.47px;font:normal 400 22px/22px 'Liberation Sans',sans-serif;color:#f4f4f4;letter-spacing:-0.346px;">Tracing Result</span>
<svg style="left:2383.5px;top:513.5px;" width="17" height="9.5" viewBox="0 0 17 9.5"><path d="M1,1 L8.5,8.5 L16.0,1" fill="none" stroke="#f0f0f0" stroke-width="3" stroke-linecap="round" stroke-linejoin="round"/></svg>
<span class="t" style="left:1986.00px;top:570.17px;font:normal 400 22px/22px 'Liberation Sans',sans-serif;color:#cfcfcf;letter-spacing:-0.656px;">Mode:</span>
<div class="dd" style="left:2052px;top:556.3px;width:360px;height:45px"></div>
<span class="t" style="left:2067.50px;top:570.17px;font:normal 400 22px/22px 'Liberation Sans',sans-serif;color:#f4f4f4;letter-spacing:-0.179px;">Black and White</span>
<svg style="left:2383.5px;top:574.8px;" width="17" height="9.5" viewBox="0 0 17 9.5"><path d="M1,1 L8.5,8.5 L16.0,1" fill="none" stroke="#f0f0f0" stroke-width="3" stroke-linecap="round" stroke-linejoin="round"/></svg>
<span class="t" style="left:1972.00px;top:628.87px;font:normal 400 22px/22px 'Liberation Sans',sans-serif;color:#7b7b7b;letter-spacing:-0.304px;">Palette:</span>
<div class="a" style="left:2052px;top:613.5px;width:360px;height:45px;background:#5a5a5a;border-radius:5px"></div>
<span class="t" style="left:2067.50px;top:628.87px;font:normal 400 22px/22px 'Liberation Sans',sans-serif;color:#7b7b7b;letter-spacing:-0.062px;">Limited</span>
<svg style="left:2383.5px;top:632.0px;" width="17" height="9.5" viewBox="0 0 17 9.5"><path d="M1,1 L8.5,8.5 L16.0,1" fill="none" stroke="#646464" stroke-width="2.6" stroke-linecap="round" stroke-linejoin="round"/></svg>
<svg style="left:0px;top:0px;" width="3362" height="1727" viewBox="0 0 3362 1727"><rect x="2437.2" y="446.6" width="3.4" height="3" fill="#c4c4c4"/><rect x="2444" y="446.6" width="20.8" height="3" fill="#c4c4c4"/><rect x="2437.2" y="452.8" width="3.4" height="3" fill="#c4c4c4"/><rect x="2444" y="452.8" width="20.8" height="3" fill="#c4c4c4"/><rect x="2437.2" y="459.2" width="3.4" height="3" fill="#c4c4c4"/><rect x="2444" y="459.2" width="20.8" height="3" fill="#c4c4c4"/><path d="M2435.3,518.7 C2441,507.5 2458.5,507.5 2464.4,518.7 C2458.5,530 2441,530 2435.3,518.7 Z" fill="#c4c4c4"/><circle cx="2449.8" cy="518.4" r="5" fill="none" stroke="#555" stroke-width="2.2"/><circle cx="2449.8" cy="516.6" r="1.6" fill="#555"/></svg>
<span class="t" style="left:1942.50px;top:683.37px;font:normal 400 22px/22px 'Liberation Sans',sans-serif;color:#cfcfcf;letter-spacing:-0.222px;">Threshold:</span>
<div class="a" style="left:2054px;top:691.0px;width:266.5px;height:2.6px;background:#7a7a7a;border-radius:1px;"></div>
<div class="a" style="left:2354.5px;top:691.0px;width:24.5px;height:2.6px;background:#7a7a7a;border-radius:1px;"></div>
<div class="a" style="left:2324.0px;top:678.7px;width:27px;height:27px;border:4.2px solid #d4d4d4;border-radius:50%"></div>
<div class="fld" style="left:2393px;top:671.0px;width:82px;height:42px;background:#464646;border-color:#5b5b5b"></div>
<span class="t" style="left:2404.20px;top:682.63px;font:normal 400 21px/21px 'DejaVu Sans Condensed','DejaVu Sans',sans-serif;color:#f4f4f4;font-stretch:condensed;letter-spacing:-0.250px;">230</span>
<span class="t" style="left:2052.50px;top:720.07px;font:normal 400 22px/22px 'Liberation Sans',sans-serif;color:#cfcfcf;letter-spacing:-1.500px;">Less</span>
<span class="t" style="left:2334.00px;top:720.07px;font:normal 400 22px/22px 'Liberation Sans',sans-serif;color:#cfcfcf;letter-spacing:-0.542px;">More</span>
<svg style="left:1951px;top:772px;" width="28" height="17" viewBox="0 0 28 17"><path d="M1,2 H26 L13.5,15.5 Z" fill="#c8c8c8"/></svg>
<span class="t" style="left:1987.00px;top:765.77px;font:normal 400 22px/22px 'Liberation Sans',sans-serif;color:#cfcfcf;letter-spacing:-0.768px;">Advanced</span>
<div class="a" style="left:2085px;top:775.5px;width:393px;height:2px;background:#474747;"></div>
<span class="t" style="left:1986.00px;top:825.07px;font:normal 400 22px/22px 'Liberation Sans',sans-serif;color:#cfcfcf;letter-spacing:-0.775px;">Paths:</span>
<div class="a" style="left:2054px;top:831.8px;width:240px;height:2.6px;background:#7a7a7a;border-radius:1px;"></div>
<div class="a" style="left:2328px;top:831.8px;width:51px;height:2.6px;background:#7a7a7a;border-radius:1px;"></div>
<div class="a" style="left:2297.5px;top:819.5px;width:27px;height:27px;border:4.2px solid #d4d4d4;border-radius:50%"></div>
<div class="fld" style="left:2393px;top:812.0px;width:82px;height:42px;background:#464646;border-color:#5b5b5b"></div>
<span class="t" style="left:2404.20px;top:823.63px;font:normal 400 21px/21px 'DejaVu Sans Condensed','DejaVu Sans',sans-serif;color:#f4f4f4;font-stretch:condensed;letter-spacing:1.000px;">81%</span>
<span class="t" style="left:2052.50px;top:860.87px;font:normal 400 22px/22px 'Liberation Sans',sans-serif;color:#cfcfcf;letter-spacing:-0.750px;">Low</span>
<span class="t" style="left:2336.50px;top:860.87px;font:normal 400 22px/22px 'Liberation Sans',sans-serif;color:#cfcfcf;letter-spacing:-0.583px;">High</span>
<span class="t" style="left:1963.50px;top:909.37px;font:normal 400 22px/22px 'Liberation Sans',sans-serif;color:#cfcfcf;letter-spacing:-0.482px;">Corners:</span>
<div class="a" style="left:2054px;top:915.6999999999999px;width:143.30000000000018px;height:2.6px;background:#7a7a7a;border-radius:1px;"></div>
<div class="a" style="left:2231.3px;top:915.6999999999999px;width:147.69999999999982px;height:2.6px;background:#7a7a7a;border-radius:1px;"></div>
<div class="a" style="left:2200.8px;top:903.4px;width:27px;height:27px;border:4.2px solid #d4d4d4;border-radius:50%"></div>
<div class="fld" style="left:2393px;top:896.0px;width:82px;height:42px;background:#464646;border-color:#5b5b5b"></div>
<span class="t" style="left:2404.20px;top:907.63px;font:normal 400 21px/21px 'DejaVu Sans Condensed','DejaVu Sans',sans-serif;color:#f4f4f4;font-stretch:condensed;letter-spacing:1.000px;">49%</span>
<span class="t" style="left:2052.50px;top:944.87px;font:normal 400 22px/22px 'Liberation Sans',sans-serif;color:#cfcfcf;letter-spacing:-1.500px;">Less</span>
<span class="t" style="left:2334.00px;top:944.87px;font:normal 400 22px/22px 'Liberation Sans',sans-serif;color:#cfcfcf;letter-spacing:-0.542px;">More</span>
<span class="t" style="left:1985.00px;top:992.47px;font:normal 400 22px/22px 'Liberation Sans',sans-serif;color:#cfcfcf;letter-spacing:-0.575px;">Noise:</span>
<div class="a" style="left:2054px;top:998.8px;width:189.80000000000018px;height:2.6px;background:#7a7a7a;border-radius:1px;"></div>
<div class="a" style="left:2277.8px;top:998.8px;width:101.19999999999982px;height:2.6px;background:#7a7a7a;border-radius:1px;"></div>
<div class="a" style="left:2247.3px;top:986.5px;width:27px;height:27px;border:4.2px solid #d4d4d4;border-radius:50%"></div>
<div class="fld" style="left:2393px;top:979.5px;width:82px;height:42px;background:#464646;border-color:#5b5b5b"></div>
<span class="t" style="left:2404.20px;top:991.13px;font:normal 400 21px/21px 'DejaVu Sans Condensed','DejaVu Sans',sans-serif;color:#f4f4f4;font-stretch:condensed;letter-spacing:0.188px;">65 px</span>
<span class="t" style="left:2054.50px;top:1027.17px;font:normal 400 22px/22px 'Liberation Sans',sans-serif;color:#cfcfcf;">1</span>
<span class="t" style="left:2346.00px;top:1027.17px;font:normal 400 22px/22px 'Liberation Sans',sans-serif;color:#cfcfcf;letter-spacing:-1.125px;">100</span>
<div class="cb" style="left:1975px;top:1064px;width:26.5px;height:26.5px"></div>
<span class="t" style="left:2013.00px;top:1067.97px;font:normal 400 22px/22px 'Liberation Sans',sans-serif;color:#f4f4f4;letter-spacing:-0.286px;">Simplify</span>
<span class="t" style="left:1960.50px;top:1119.77px;font:normal 400 22px/22px 'Liberation Sans',sans-serif;color:#7b7b7b;letter-spacing:-0.411px;">Anchors:</span>
<div class="a" style="left:2054px;top:1126.5px;width:266.5px;height:2.6px;background:#676767;border-radius:1px;"></div>
<div class="a" style="left:2354.5px;top:1126.5px;width:24.5px;height:2.6px;background:#676767;border-radius:1px;"></div>
<div class="a" style="left:2324.0px;top:1114.2px;width:27px;height:27px;border:4.2px solid #7d7d7d;border-radius:50%"></div>
<div class="a" style="left:2393px;top:1106.8px;width:82px;height:42px;background:#5a5a5a;border-radius:4px"></div>
<span class="t" style="left:2404.20px;top:1118.43px;font:normal 400 21px/21px 'DejaVu Sans Condensed','DejaVu Sans',sans-serif;color:#727272;font-stretch:condensed;letter-spacing:1.000px;">90%</span>
<span class="t" style="left:2052.50px;top:1155.57px;font:normal 400 22px/22px 'Liberation Sans',sans-serif;color:#6f6f6f;letter-spacing:-1.500px;">Less</span>
<span class="t" style="left:2334.00px;top:1155.57px;font:normal 400 22px/22px 'Liberation Sans',sans-serif;color:#6f6f6f;letter-spacing:-0.542px;">More</span>
<span class="t" style="left:1965.50px;top:1202.87px;font:normal 400 22px/22px 'Liberation Sans',sans-serif;color:#cfcfcf;letter-spacing:-0.083px;">Method:</span>
<div class="a" style="left:2053px;top:1189.5px;width:108px;height:53px;background:#595959;border:2px solid #5f5f5f;border-radius:5px"></div>
<div class="a" style="left:2054.5px;top:1191.5px;width:50.5px;height:49px;background:#2b2b2b;border-radius:4px 0 0 4px;"></div>
<svg style="left:0px;top:0px;" width="3362" height="1727" viewBox="0 0 3362 1727"><path d="M2063.5,1200 H2088 V1205.5 H2091 V1226.5 H2088 V1231.5 H2063.5 Z" fill="#ffffff"/><circle cx="2078" cy="1216" r="10.4" fill="#2b2b2b"/><circle cx="2086.2" cy="1216" r="9.4" fill="#808080" stroke="#ffffff" stroke-width="2.4"/><path d="M2118,1200 H2142.5 V1205.5 H2145.5 V1226.5 H2142.5 V1231.5 H2118 Z" fill="#c2c2c2"/><circle cx="2141.2" cy="1216" r="9.4" fill="#808080" stroke="#c2c2c2" stroke-width="2.4"/></svg>
<span class="t" style="left:1975.00px;top:1260.17px;font:normal 400 22px/22px 'Liberation Sans',sans-serif;color:#cfcfcf;letter-spacing:-0.438px;">Create:</span>
<div class="a" style="left:2054.0px;top:1255.0px;width:26.5px;height:26.5px;background:#c6c6c6;border-radius:4px"></div>
<svg style="left:2054px;top:1255px;" width="27" height="27" viewBox="0 0 27 27"><path d="M5.8,13.2 L11.6,19.4 L21.6,7.4" fill="none" stroke="#3e3e3e" stroke-width="4"/></svg>
<span class="t" style="left:2092.50px;top:1257.87px;font:normal 400 22px/22px 'Liberation Sans',sans-serif;color:#f4f4f4;letter-spacing:-0.656px;">Fills</span>
<div class="cb" style="left:2142.0px;top:1255.0px;width:27px;height:27px"></div>
<span class="t" style="left:2180.00px;top:1257.87px;font:normal 400 22px/22px 'Liberation Sans',sans-serif;color:#f4f4f4;letter-spacing:-0.521px;">Strokes</span>
<span class="t" style="left:1976.00px;top:1310.47px;font:normal 400 22px/22px 'Liberation Sans',sans-serif;color:#7b7b7b;letter-spacing:-0.208px;">Stroke:</span>
<div class="a" style="left:2052.5px;top:1297.5px;width:153px;height:45px;background:#5a5a5a;border-radius:4px"></div>
<div class="a" style="left:2091px;top:1298px;width:2px;height:44px;background:#555555;"></div>
<svg style="left:2064px;top:1305px;" width="17" height="9.5" viewBox="0 0 17 9.5"><path d="M1,8.5 L8.5,1 L16.0,8.5" fill="none" stroke="#6a6a6a" stroke-width="2.4" stroke-linecap="round" stroke-linejoin="round"/></svg>
<svg style="left:2064px;top:1327px;" width="17" height="9.5" viewBox="0 0 17 9.5"><path d="M1,1 L8.5,8.5 L16.0,1" fill="none" stroke="#6a6a6a" stroke-width="2.4" stroke-linecap="round" stroke-linejoin="round"/></svg>
<span class="t" style="left:2100.50px;top:1311.23px;font:normal 400 21px/21px 'DejaVu Sans Condensed','DejaVu Sans',sans-serif;color:#747474;font-stretch:condensed;letter-spacing:0.188px;">10 px</span>
<span class="t" style="left:1963.50px;top:1361.47px;font:normal 400 22px/22px 'Liberation Sans',sans-serif;color:#cfcfcf;letter-spacing:-0.143px;">Options:</span>
<div class="cb" style="left:2054.0px;top:1356.5px;width:27px;height:27px"></div>
<span class="t" style="left:2092.50px;top:1359.77px;font:normal 400 22px/22px 'Liberation Sans',sans-serif;color:#f4f4f4;letter-spacing:-0.467px;">Snap Curves To Lines</span>
<div class="a" style="left:2054.0px;top:1410.7px;width:26.5px;height:26.5px;background:#c6c6c6;border-radius:4px"></div>
<svg style="left:2054px;top:1410.7px;" width="27" height="27" viewBox="0 0 27 27"><path d="M5.8,13.2 L11.6,19.4 L21.6,7.4" fill="none" stroke="#3e3e3e" stroke-width="4"/></svg>
<span class="t" style="left:2092.50px;top:1413.87px;font:normal 400 22px/22px 'Liberation Sans',sans-serif;color:#f4f4f4;letter-spacing:-0.102px;">Ignore Color</span>
<div class="a" style="left:2235px;top:1406.5px;width:72.5px;height:40.5px;background:#ffffff;"></div>
<svg style="left:2332px;top:1407px;" width="40" height="40" viewBox="0 0 40 40"><path d="M3.2,36.6 C1.4,34.8 1.6,32.6 3.4,30.8 L18,16.2 L23.6,21.8 L9,36.4 C7.2,38.2 5,38.4 3.2,36.6 Z" fill="none" stroke="#c4c4c4" stroke-width="2.4"/><path d="M15.6,13.4 L18.2,10.8 L20.6,13.2 L25.6,6.6 C27.6,3.4 31.8,1.4 35,4.6 C38.2,7.8 36.2,12 33,14 L26.4,19 L28.8,21.4 L26.2,24 Z" fill="#c4c4c4"/></svg>
<div class="a" style="left:1940px;top:1467.5px;width:538px;height:2px;background:#474747;"></div>
<svg style="left:1943px;top:1505px;" width="32" height="32" viewBox="0 0 32 32"><circle cx="15.8" cy="15.6" r="13.6" fill="none" stroke="#c4c4c4" stroke-width="2.6"/><circle cx="15.6" cy="9.4" r="2.2" fill="#c4c4c4"/><path d="M12.2,13.4 H17.4 V21.4 H19.8 V23.6 H12 V21.4 H14.4 V15.6 H12.2 Z" fill="#c4c4c4"/></svg>
<span class="t" style="left:1997.50px;top:1489.87px;font:normal 400 22px/22px 'Liberation Sans',sans-serif;color:#cfcfcf;letter-spacing:-0.775px;">Paths:</span>
<span class="t" style="left:2093.50px;top:1489.87px;font:normal 400 22px/22px 'Liberation Sans',sans-serif;color:#cfcfcf;">5</span>
<span class="t" style="left:2256.50px;top:1489.87px;font:normal 400 22px/22px 'Liberation Sans',sans-serif;color:#cfcfcf;letter-spacing:-0.542px;">Colors:</span>
<span class="t" style="left:2338.00px;top:1489.87px;font:normal 400 22px/22px 'Liberation Sans',sans-serif;color:#cfcfcf;">1</span>
<span class="t" style="left:1997.50px;top:1535.17px;font:normal 400 22px/22px 'Liberation Sans',sans-serif;color:#cfcfcf;letter-spacing:-0.554px;">Anchors:</span>
<span class="t" style="left:2093.50px;top:1535.17px;font:normal 400 22px/22px 'Liberation Sans',sans-serif;color:#cfcfcf;letter-spacing:-1.000px;">83</span>
<div class="a" style="left:1940px;top:1575px;width:538px;height:2px;background:#474747;"></div>
<div class="cb" style="left:1942.0px;top:1600.5px;width:27px;height:27px"></div>
<span class="t" style="left:1980.00px;top:1604.37px;font:normal 400 22px/22px 'Liberation Sans',sans-serif;color:#f4f4f4;letter-spacing:-0.646px;">Preview</span>
<div class="a" style="left:2335.5px;top:1589.5px;width:140.5px;height:41px;border:2px solid #6c6c6c;border-radius:5px;background:#595959"></div>
<span class="t" style="left:2381.50px;top:1601.37px;font:normal 400 22px/22px 'Liberation Sans',sans-serif;color:#f4f4f4;letter-spacing:-1.344px;">Trace</span>

<!-- p60_rdock -->
<div class="a" id="vscroll" style="left:2694px;top:211px;width:35px;height:1475px;background:#4a4a4a;"></div>
<svg style="left:2704px;top:225.2px;" width="17.5" height="9.8" viewBox="0 0 17.5 9.8"><path d="M1,8.8 L8.8,1 L16.5,8.8" fill="none" stroke="#a6a6a6" stroke-width="2.6" stroke-linecap="round" stroke-linejoin="round"/></svg>
<div class="a" style="left:2696px;top:1011.5px;width:32.5px;height:57px;background:#5f5f5f;border-radius:16px;"></div>
<div class="a" style="left:2729px;top:148px;width:633px;height:26px;background:#424242;"></div>
<div class="a" style="left:2729px;top:148px;width:2.5px;height:1538px;background:#3a3a3a;"></div>
<div class="a" style="left:2731.5px;top:148px;width:2.5px;height:1538px;background:#494949;"></div>
<div class="a" style="left:2729px;top:173px;width:633px;height:1.6px;background:#393939;"></div>
<div class="a" id="rdock" style="left:2734px;top:175px;width:83px;height:1511px;background:#535353;"></div>
<div class="a" style="left:2817px;top:175px;width:2.4px;height:1511px;background:#3a3a3a;"></div>
<div class="a" style="left:2819.4px;top:175px;width:2.2px;height:1511px;background:#4b4b4b;"></div>
<svg style="left:0px;top:0px;" width="3362" height="1727" viewBox="0 0 3362 1727"><path d="M2796.5,155.8 V163.6 L2790.6,159.7 Z M2803.5,155.8 V163.6 L2797.6,159.7 Z" fill="#d0d0d0"/><path d="M3335.5,155.8 V163.6 L3341.4,159.7 Z M3342.5,155.8 V163.6 L3348.4,159.7 Z" fill="#d0d0d0"/><rect x="2755.2" y="181.4" width="2" height="8.5" fill="#3a3a3a"/><rect x="2760.8" y="181.4" width="2" height="8.5" fill="#3a3a3a"/><rect x="2766.3" y="181.4" width="2" height="8.5" fill="#3a3a3a"/><rect x="2771.8" y="181.4" width="2" height="8.5" fill="#3a3a3a"/><rect x="2777.4" y="181.4" width="2" height="8.5" fill="#3a3a3a"/><rect x="2782.9" y="181.4" width="2" height="8.5" fill="#3a3a3a"/><rect x="2788.5" y="181.4" width="2" height="8.5" fill="#3a3a3a"/><rect x="2794.0" y="181.4" width="2" height="8.5" fill="#3a3a3a"/><rect x="2734" y="323.0" width="83" height="2.2" fill="#3c3c3c"/><rect x="2755.2" y="333.0" width="2" height="8.5" fill="#3a3a3a"/><rect x="2760.8" y="333.0" width="2" height="8.5" fill="#3a3a3a"/><rect x="2766.3" y="333.0" width="2" height="8.5" fill="#3a3a3a"/><rect x="2771.8" y="333.0" width="2" height="8.5" fill="#3a3a3a"/><rect x="2777.4" y="333.0" width="2" height="8.5" fill="#3a3a3a"/><rect x="2782.9" y="333.0" width="2" height="8.5" fill="#3a3a3a"/><rect x="2788.5" y="333.0" width="2" height="8.5" fill="#3a3a3a"/><rect x="2794.0" y="333.0" width="2" height="8.5" fill="#3a3a3a"/><rect x="2734" y="537.2" width="83" height="2.2" fill="#3c3c3c"/><rect x="2755.2" y="546.5" width="2" height="8.5" fill="#3a3a3a"/><rect x="2760.8" y="546.5" width="2" height="8.5" fill="#3a3a3a"/><rect x="2766.3" y="546.5" width="2" height="8.5" fill="#3a3a3a"/><rect x="2771.8" y="546.5" width="2" height="8.5" fill="#3a3a3a"/><rect x="2777.4" y="546.5" width="2" height="8.5" fill="#3a3a3a"/><rect x="2782.9" y="546.5" width="2" height="8.5" fill="#3a3a3a"/><rect x="2788.5" y="546.5" width="2" height="8.5" fill="#3a3a3a"/><rect x="2794.0" y="546.5" width="2" height="8.5" fill="#3a3a3a"/><rect x="2734" y="750.8" width="83" height="2.2" fill="#3c3c3c"/><rect x="2755.2" y="760.2" width="2" height="8.5" fill="#3a3a3a"/><rect x="2760.8" y="760.2" width="2" height="8.5" fill="#3a3a3a"/><rect x="2766.3" y="760.2" width="2" height="8.5" fill="#3a3a3a"/><rect x="2771.8" y="760.2" width="2" height="8.5" fill="#3a3a3a"/><rect x="2777.4" y="760.2" width="2" height="8.5" fill="#3a3a3a"/><rect x="2782.9" y="760.2" width="2" height="8.5" fill="#3a3a3a"/><rect x="2788.5" y="760.2" width="2" height="8.5" fill="#3a3a3a"/><rect x="2794.0" y="760.2" width="2" height="8.5" fill="#3a3a3a"/><rect x="2734" y="902.0" width="83" height="2.2" fill="#3c3c3c"/><rect x="2755.2" y="911.3" width="2" height="8.5" fill="#3a3a3a"/><rect x="2760.8" y="911.3" width="2" height="8.5" fill="#3a3a3a"/><rect x="2766.3" y="911.3" width="2" height="8.5" fill="#3a3a3a"/><rect x="2771.8" y="911.3" width="2" height="8.5" fill="#3a3a3a"/><rect x="2777.4" y="911.3" width="2" height="8.5" fill="#3a3a3a"/><rect x="2782.9" y="911.3" width="2" height="8.5" fill="#3a3a3a"/><rect x="2788.5" y="911.3" width="2" height="8.5" fill="#3a3a3a"/><rect x="2794.0" y="911.3" width="2" height="8.5" fill="#3a3a3a"/><rect x="2734" y="1053.0" width="83" height="2.2" fill="#3c3c3c"/><rect x="2755.2" y="1062.6" width="2" height="8.5" fill="#3a3a3a"/><rect x="2760.8" y="1062.6" width="2" height="8.5" fill="#3a3a3a"/><rect x="2766.3" y="1062.6" width="2" height="8.5" fill="#3a3a3a"/><rect x="2771.8" y="1062.6" width="2" height="8.5" fill="#3a3a3a"/><rect x="2777.4" y="1062.6" width="2" height="8.5" fill="#3a3a3a"/><rect x="2782.9" y="1062.6" width="2" height="8.5" fill="#3a3a3a"/><rect x="2788.5" y="1062.6" width="2" height="8.5" fill="#3a3a3a"/><rect x="2794.0" y="1062.6" width="2" height="8.5" fill="#3a3a3a"/><rect x="2734" y="1390.0" width="83" height="2.2" fill="#3c3c3c"/><path d="M2757,228 C2756,217 2768,210 2781,210 C2792,210 2799,216 2798.5,224.5 C2798,232 2791,233 2788,236 C2784,240.5 2776,241.5 2768,240 C2761,238.5 2757.5,234 2757,228 Z" fill="#c8c8c8"/><circle cx="2765.0" cy="229.0" r="3.4" fill="#535353"/><circle cx="2774.5" cy="234.0" r="3.2" fill="#535353"/><circle cx="2784.0" cy="231.0" r="3.0" fill="#535353"/><circle cx="2790.5" cy="224.0" r="2.8" fill="#535353"/><circle cx="2787.0" cy="217.0" r="2.4" fill="#535353"/><ellipse cx="2772" cy="219" rx="5" ry="3.6" fill="#535353"/><defs><linearGradient id="lg4" x1="0" y1="0" x2="0.9" y2="1"><stop offset="0" stop-color="#222"/><stop offset="0.5" stop-color="#777"/><stop offset="1" stop-color="#f4f4f4"/></linearGradient></defs><path d="M2761.3,271.2 A33,33 0 0 1 2795,303.5 H2761.3 Z" fill="url(#lg4)" stroke="#c8c8c8" stroke-width="2"/><rect x="2758.3" y="367" width="36" height="24.4" fill="#c8c8c8"/><rect x="2761.0" y="369.4" width="8.6" height="8.6" fill="#a4a4a4"/><rect x="2772.2" y="369.4" width="8.6" height="8.6" fill="#cfcfcf"/><rect x="2783.4" y="369.4" width="8.6" height="8.6" fill="#8e8e8e"/><rect x="2761.0" y="380.4" width="8.6" height="8.6" fill="#8a8a8a"/><rect x="2772.2" y="380.4" width="8.6" height="8.6" fill="#9c9c9c"/><rect x="2783.4" y="380.4" width="8.6" height="8.6" fill="#a8a8a8"/><rect x="2767" y="445" width="21" height="17" rx="2" fill="#c8c8c8"/><path d="M2774.5,445 L2772.6,431 M2779,445 V428 M2783.5,445 L2788,432" stroke="#c8c8c8" stroke-width="2.4"/><path d="M2768,423.5 C2771.5,426.5 2774.5,430 2773,436 C2768.5,436 2764.5,431 2768,423.5 Z M2776,418 H2781.5 V431 H2776 Z M2786,435 C2783,428 2789,424 2795.5,426 C2796,430 2792,434 2786,435 Z" fill="#c8c8c8"/><circle cx="2777.8" cy="492" r="9.2" fill="#c8c8c8"/><circle cx="2768.8" cy="504" r="9" fill="#c8c8c8"/><circle cx="2786.8" cy="504" r="9" fill="#c8c8c8"/><path d="M2776,500 H2779.6 C2779.6,510 2781,514.5 2789.5,516.3 V519.4 H2766 V516.3 C2774.6,514.5 2776,510 2776,500 Z" fill="#c8c8c8"/><rect x="2758.6" y="577" width="37.8" height="2.2" fill="#c8c8c8"/><rect x="2758.6" y="585.5" width="37.8" height="5.4" fill="#c8c8c8"/><rect x="2758.6" y="596" width="37.8" height="8.6" fill="#c8c8c8"/><defs><linearGradient id="lg5" x1="0" x2="1"><stop offset="0" stop-color="#1e1e1e"/><stop offset="1" stop-color="#efefef"/></linearGradient></defs><rect x="2759.8" y="639.8" width="35.6" height="24.8" fill="url(#lg5)" stroke="#c8c8c8" stroke-width="2.4"/><circle cx="2770.8" cy="709.4" r="14.2" fill="#d0d0d0"/><circle cx="2781.2" cy="720.8" r="12" fill="#6e6e6e" stroke="#d0d0d0" stroke-width="2.4"/><path d="M2771,722 A12,12 0 0 1 2790,713" fill="none" stroke="#8c8c8c" stroke-width="5" opacity=".7"/><circle cx="2777.2" cy="804.6" r="17.4" fill="none" stroke="#c8c8c8" stroke-width="2.2" stroke-dasharray="4.4 3.4"/><circle cx="2777.2" cy="804.6" r="12.6" fill="#d0d0d0"/><rect x="2768" y="851.2" width="26" height="27.6" fill="none" stroke="#c8c8c8" stroke-width="2.6"/><rect x="2765.5" y="871" width="12.5" height="12" fill="#535353" stroke="#c8c8c8" stroke-width="2.4"/><rect x="2759.8" y="866.4" width="11.4" height="11" fill="#535353" stroke="#c8c8c8" stroke-width="2.4"/><path d="M2776,944 H2760.4 V972 H2792.4 V958" fill="none" stroke="#c8c8c8" stroke-width="3.4"/><path d="M2776,957.5 L2795.5,938" stroke="#c8c8c8" stroke-width="3.2"/><path d="M2783,936.2 H2797.4 V950.5" fill="none" stroke="#c8c8c8" stroke-width="3.2"/><rect x="2758" y="997.5" width="23" height="27" fill="none" stroke="#c8c8c8" stroke-width="2.4"/><rect x="2768.5" y="1010.5" width="26.5" height="23.5" fill="#535353" stroke="#c8c8c8" stroke-width="2.6"/><rect x="2792" y="1088.6" width="2.4" height="38" fill="#c8c8c8"/><rect x="2765.8" y="1298.5" width="11.5" height="11" fill="#535353" stroke="#c8c8c8" stroke-width="2.4"/><rect x="2759.8" y="1293.5" width="11" height="10.5" fill="#535353" stroke="#c8c8c8" stroke-width="2.4"/><rect x="2765.8" y="1360.5" width="11.5" height="11" fill="#535353" stroke="#c8c8c8" stroke-width="2.4"/><rect x="2759.8" y="1355.5" width="11" height="10.5" fill="#535353" stroke="#c8c8c8" stroke-width="2.4"/><path d="M2773,1156 H2788.4 V1187.8 H2785.6 V1158.8 H2781.4 V1187.8 H2778.2 V1173.5 C2768,1173.5 2762.5,1170 2762.5,1164.6 C2762.5,1159.2 2767,1156 2773,1156 Z" fill="#c8c8c8"/><path d="M2783,1337 H2794.5 V1363 H2792.2 V1339.4 H2788.8 V1363 H2786.2 V1351.5 C2778,1351.5 2774,1348.6 2774,1344.2 C2774,1339.8 2778,1337 2783,1337 Z" fill="#c8c8c8"/><defs><linearGradient id="lg6" x1="0" x2="1"><stop offset="0" stop-color="#d8d8d8"/><stop offset="0.55" stop-color="#cfcfcf"/><stop offset="1" stop-color="#7a7a7a"/></linearGradient></defs></svg>
<span class="t" style="left:2760.50px;top:1087.25px;font:normal 400 44px/44px 'Liberation Sans',sans-serif;color:#c8c8c8;">A</span>
<span class="t" style="left:2774.00px;top:1272.83px;font:normal 400 38px/38px 'Liberation Sans',sans-serif;color:#c8c8c8;">A</span>
<span class="t" style="left:2760.00px;top:1209.55px;font:italic 400 46px/46px 'Liberation Serif',serif;color:#c8c8c8;font-weight:700;">O</span>

<!-- p70_layers -->
<div class="a" id="rpanel" style="left:2821.5px;top:175px;width:540.5px;height:1511px;background:#535353;"></div>
<div class="a" style="left:2821.5px;top:175px;width:12px;height:1511px;background:#555555;"></div>
<div class="a" style="left:2821.5px;top:175px;width:540.5px;height:58px;background:#424242;"></div>
<div class="a" style="left:2821.5px;top:232.5px;width:540.5px;height:2.5px;background:#3a3a3a;"></div>
<div class="a" style="left:2822.5px;top:175px;width:104px;height:60px;background:#535353;"></div>
<div class="a" style="left:2926.5px;top:175px;width:1.6px;height:58px;background:#383838;"></div>
<div class="a" style="left:3073.5px;top:175px;width:1.6px;height:58px;background:#383838;"></div>
<div class="a" style="left:3201.5px;top:175px;width:1.6px;height:58px;background:#383838;"></div>
<span class="t" style="left:2843.80px;top:192.60px;font:normal 400 22.2px/22.2px 'Liberation Sans',sans-serif;color:#f4f4f4;letter-spacing:-1.050px;-webkit-text-stroke:0.7px #f4f4f4;">Layers</span>
<span class="t" style="left:2947.80px;top:192.60px;font:normal 400 22.2px/22.2px 'Liberation Sans',sans-serif;color:#ababab;letter-spacing:0.014px;-webkit-text-stroke:0.7px #ababab;">Properties</span>
<span class="t" style="left:3094.00px;top:192.60px;font:normal 400 22.2px/22.2px 'Liberation Sans',sans-serif;color:#ababab;letter-spacing:-0.422px;-webkit-text-stroke:0.7px #ababab;">Libraries</span>
<svg style="left:3326px;top:196px;" width="24" height="18" viewBox="0 0 24 18"><rect x="0" y="0.6" width="22.6" height="2.8" fill="#c0c0c0"/><rect x="0" y="7" width="22.6" height="2.8" fill="#c0c0c0"/><rect x="0" y="13.4" width="22.6" height="2.8" fill="#c0c0c0"/></svg>
<div class="a" style="left:2834px;top:248px;width:514.5px;height:1438px;background:#535353;border:2px solid #5c5c5c;border-bottom:none;border-radius:5px 5px 0 0"></div>
<div class="a" style="left:2847.5px;top:257.5px;width:436.5px;height:48.5px;background:#464646;border:1.5px solid #5a5a5a;border-radius:5px"></div>
<svg style="left:2858px;top:266px;" width="32" height="32" viewBox="0 0 32 32"><circle cx="12.4" cy="12.6" r="8" fill="none" stroke="#d2d2d2" stroke-width="3"/><path d="M18.4,18.8 L27.2,27" stroke="#d2d2d2" stroke-width="4" stroke-linecap="round"/></svg>
<span class="t" style="left:2911.50px;top:269.14px;font:normal 400 27px/27px 'Liberation Sans',sans-serif;color:#646464;letter-spacing:-1.569px;">Search All</span>
<svg style="left:3307px;top:267px;" width="31" height="33" viewBox="0 0 31 33"><path d="M0.6,0.6 H30 L18.2,15.4 V27 L12.4,32 V15.4 Z" fill="#c6c6c6"/></svg>
<div class="a" style="left:2835.5px;top:327.3px;width:512.5px;height:43.2px;background:#4d6380;"></div>
<div class="a" style="left:2880px;top:327.3px;width:1.4px;height:43.2px;background:#455a76;"></div>
<div class="a" style="left:2880px;top:371.5px;width:1.4px;height:46px;background:#4b4b4b;"></div>
<div class="a" style="left:2926px;top:327.3px;width:1.4px;height:43.2px;background:#455a76;"></div>
<div class="a" style="left:2926px;top:371.5px;width:1.4px;height:46px;background:#4b4b4b;"></div>
<div class="a" style="left:2940.6px;top:327.3px;width:1.4px;height:43.2px;background:#455a76;"></div>
<div class="a" style="left:2940.6px;top:371.5px;width:1.4px;height:46px;background:#4b4b4b;"></div>
<div class="a" style="left:3269px;top:327.3px;width:1.4px;height:43.2px;background:#455a76;"></div>
<div class="a" style="left:3269px;top:371.5px;width:1.4px;height:46px;background:#4b4b4b;"></div>
<div class="a" style="left:2835.5px;top:370.5px;width:512.5px;height:1.4px;background:#484848;"></div>
<div class="a" style="left:2835.5px;top:417.4px;width:512.5px;height:1.6px;background:#494949;"></div>
<svg style="left:2955.5px;top:345px;" width="17" height="9" viewBox="0 0 17 9"><path d="M1,1 L8.5,8.0 L16.0,1" fill="none" stroke="#f2f2f2" stroke-width="3" stroke-linecap="round" stroke-linejoin="round"/></svg>
<svg style="left:2994.5px;top:330.8px;" width="39" height="39" viewBox="0 0 39 39"><rect x="0.8" y="0.8" width="37.4" height="37.4" fill="#fff" stroke="#111" stroke-width="1.6"/><circle cx="19.5" cy="19.5" r="16.6" fill="#0a0a0a"/><path d="M8.6,20.6 H30.4 A11,11 0 0 1 8.6,20.6 Z" fill="#fff"/><path d="M15.6,10.5 c-2.4,1.6 0.8,3.4 0,6.2 M19.8,10.5 c-2.4,1.6 0.8,3.4 0,6.2 M24,10.5 c-2.4,1.6 0.8,3.4 0,6.2" fill="none" stroke="#fff" stroke-width="1.4"/></svg>
<svg style="left:3045.5px;top:376.4px;" width="39" height="39" viewBox="0 0 39 39"><rect x="0.8" y="0.8" width="37.4" height="37.4" fill="#fff" stroke="#111" stroke-width="1.6"/><circle cx="19.5" cy="19.5" r="16.6" fill="#0a0a0a"/><path d="M8.6,20.6 H30.4 A11,11 0 0 1 8.6,20.6 Z" fill="#fff"/><path d="M15.6,10.5 c-2.4,1.6 0.8,3.4 0,6.2 M19.8,10.5 c-2.4,1.6 0.8,3.4 0,6.2 M24,10.5 c-2.4,1.6 0.8,3.4 0,6.2" fill="none" stroke="#fff" stroke-width="1.4"/></svg>
<span class="t" style="left:3045.80px;top:339.87px;font:normal 400 22px/22px 'Liberation Sans',sans-serif;color:#e2e2e2;letter-spacing:-0.163px;">Isolation Mode</span>
<span class="t" style="left:3095.50px;top:386.07px;font:normal 400 22px/22px 'Liberation Sans',sans-serif;color:#f2f2f2;letter-spacing:0.083px;">Image T...</span>
<div class="a" style="left:3315px;top:342px;width:17px;height:16.4px;background:#4a86ff;border:1.6px solid #111;"></div>
<div class="a" style="left:3315px;top:387.8px;width:17px;height:16.4px;background:#4a86ff;border:1.6px solid #111;"></div>
<svg style="left:3333px;top:327px;" width="16" height="16" viewBox="0 0 16 16"><path d="M0.4,0.3 H15 V14.6 Z" fill="#c4c4c4"/></svg>
<div class="a" style="left:2929.5px;top:376.5px;width:7.4px;height:39.8px;background:#4a86ff;"></div>
<svg style="left:2844px;top:386px;" width="29" height="19" viewBox="0 0 29 19"><path d="M0.6,9.4 C6,-1.6 22.4,-1.6 27.8,9.4 C22.4,20.4 6,20.4 0.6,9.4 Z" fill="#c6c6c6"/><circle cx="14.2" cy="9" r="4.8" fill="none" stroke="#555" stroke-width="2.2"/><circle cx="14.2" cy="7.4" r="1.5" fill="#555"/></svg>
<svg style="left:3279px;top:383px;" width="29" height="29" viewBox="0 0 29 29"><circle cx="14.2" cy="14.3" r="12.4" fill="none" stroke="#a9a9a9" stroke-width="1.8"/><circle cx="14.2" cy="14.3" r="8" fill="none" stroke="#b9b9b9" stroke-width="2.6"/></svg>

<!-- p90_overlay -->
<div class="a" id="tip" style="left:2409px;top:1642px;width:566px;height:44px;background:#fafafa;border:1px solid #e0e0e0;border-bottom:none;border-radius:3px 3px 0 0;box-shadow:2px 2px 5px rgba(0,0,0,.3)"></div>
<span class="t" style="left:2420.20px;top:1651.49px;font:normal 400 26px/26px 'Liberation Sans',sans-serif;color:#5a5a5a;letter-spacing:-0.056px;">Trace the selected image using current settings</span>
<div class="a" id="redbox" style="left:2246.5px;top:1560.5px;width:297.5px;height:125.3px;border:6px solid #f2272f"></div>
<div class="a" style="left:0px;top:1686px;width:3362px;height:41px;background:#ffffff;"></div>
<svg style="left:2480px;top:1545px;" width="130" height="160" viewBox="0 0 130 160"><g style="filter:drop-shadow(1px 13px 8px rgba(0,0,0,.42))"><path d="M25,23 V117.3 L57.5,85.5 L101,84 Z" fill="#000" stroke="#fff" stroke-width="14" stroke-linejoin="round"/><path d="M25,23 V117.3 L57.5,85.5 L101,84 Z" fill="#000"/></g></svg>
</body>
</html>
